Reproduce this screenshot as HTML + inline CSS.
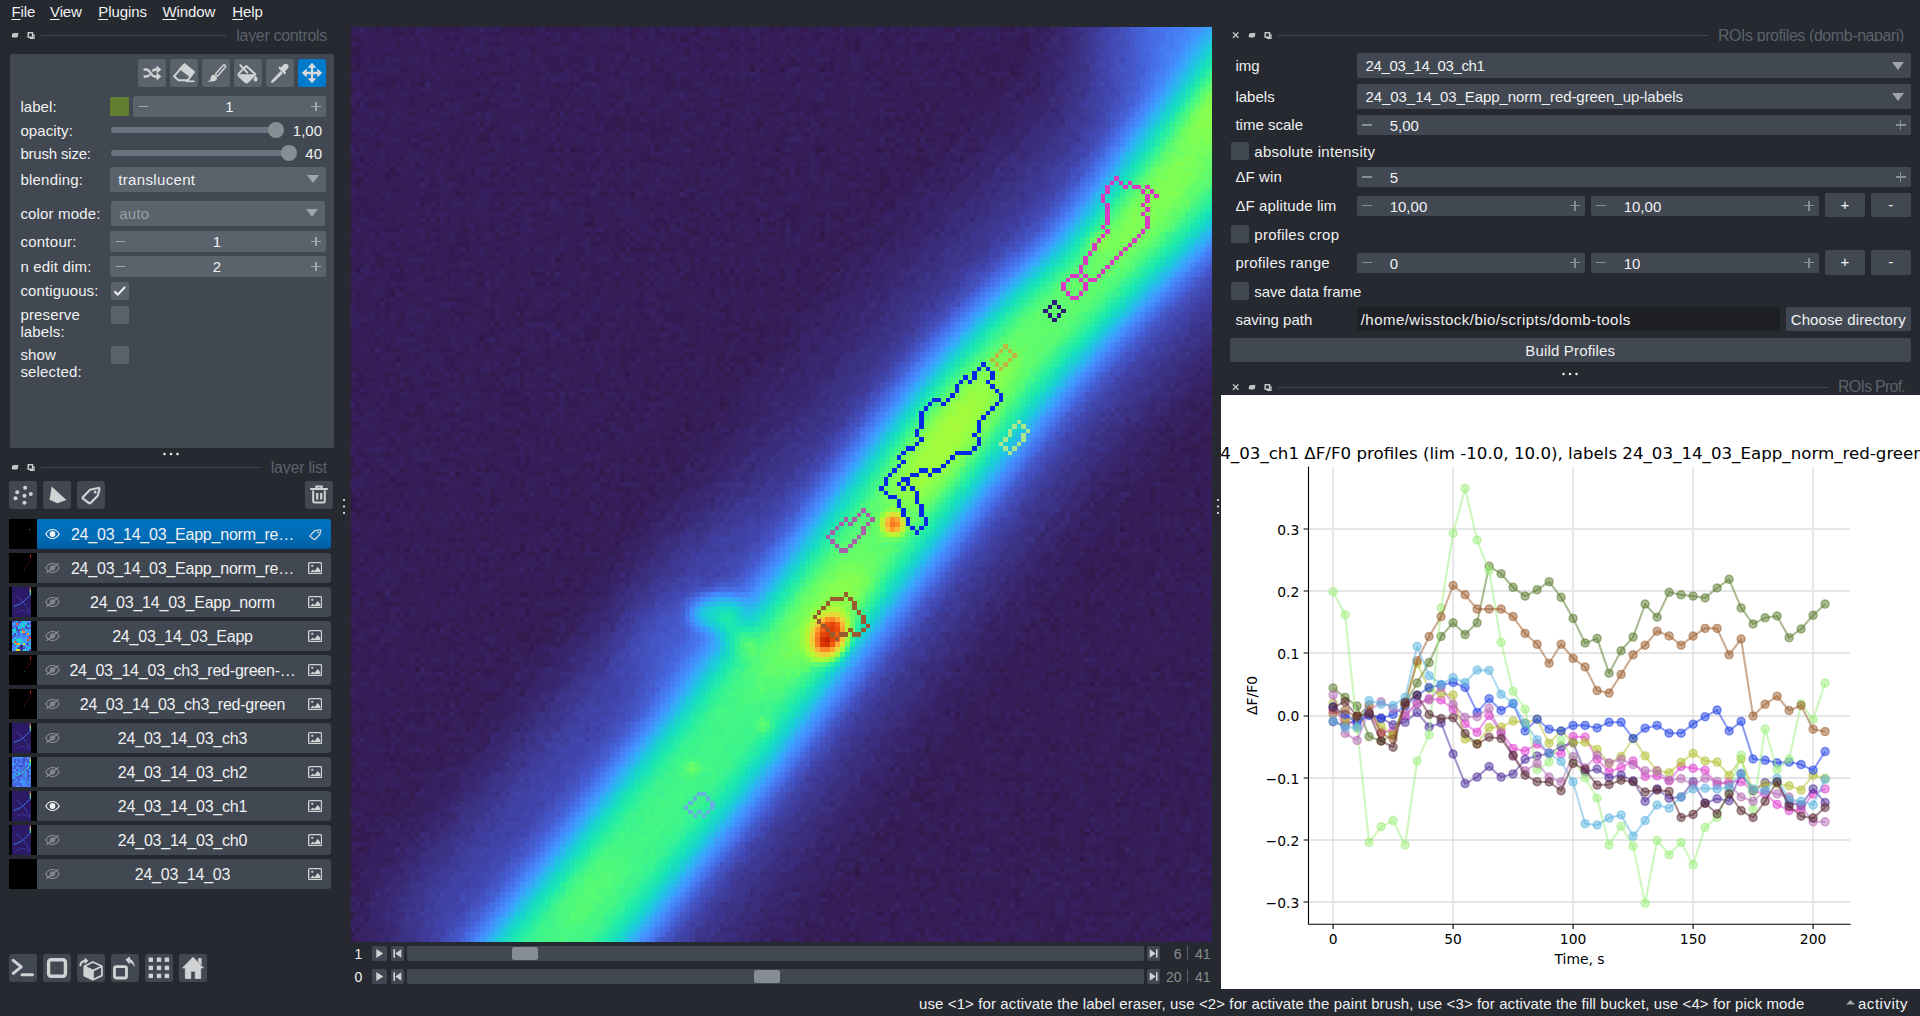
<!DOCTYPE html>
<html lang="en"><head><meta charset="utf-8"><title>napari</title>
<style>
*{box-sizing:border-box;margin:0;padding:0}
html,body{width:1920px;height:1016px;overflow:hidden;background:#262930}
body{position:relative;font-family:"Liberation Sans",sans-serif;font-size:15px;color:#f0f1f2;letter-spacing:0}
.abs{position:absolute}
.t{position:absolute;white-space:nowrap;line-height:20px;height:20px}
.menu span{position:absolute;top:2px;line-height:20px;font-size:15px;letter-spacing:-0.1px}
.menu u{text-decoration:underline;text-underline-offset:2px;text-decoration-thickness:1px}
.dtitle{position:absolute;height:13.600px;overflow:hidden;color:#5a626c;font-size:16px;letter-spacing:0}
.dtitle>span{position:absolute;right:0;top:-2.300px;line-height:20px;white-space:nowrap}
.dline{position:absolute;height:1px;background:#414851}
.panel{position:absolute;background:#414851;border-radius:2px}
.btn{position:absolute;width:28px;height:28px;border-radius:3px;background:#5a626c}
.btn.dk{background:#414851}
.btn.on{background:#007acc}
.btn svg{position:absolute;left:0;top:0}
.spin{position:absolute;background:#5a626c;border-radius:2px;height:21px}
.spin.dk{background:#414851;height:20px}
.spin .m,.spin .p{position:absolute;background:#a3a7ab}
.combo{position:absolute;background:#5a626c;border-radius:2px}
.combo.dk{background:#414851}
.arrow{position:absolute;width:0;height:0;border-left:6px solid transparent;border-right:6px solid transparent;border-top:8px solid #a0a5aa}
.chk{position:absolute;width:18px;height:18px;border-radius:2px;background:#5a626c}
.chk.dk{background:#414851}
.track{position:absolute;height:6px;border-radius:3px;background:#6a7380}
.knob{position:absolute;width:16px;height:16px;border-radius:8px;background:#868e93}
.row{position:absolute;left:9px;width:322px;height:30px;background:#414851;border-radius:0 3px 3px 0;overflow:hidden}
.row.sel{background:linear-gradient(#0071be 0%,#006cb6 60%,#005c9f 100%)}
.row .th{position:absolute;left:0;top:0;width:28px;height:30px;background:#000}
.row .nm{position:absolute;left:55.500px;width:236px;top:0;height:30px;line-height:31px;text-align:center;font-size:16px;letter-spacing:-0.22px;white-space:nowrap}
.row svg{position:absolute}
.gray{color:#868e93}
.pbtn{position:absolute;background:#414851;border-radius:2px;text-align:center;white-space:nowrap}
</style></head><body>
<!-- menu bar -->
<div class="menu">
<span style="left:11.5px"><u>F</u>ile</span><span style="left:50px"><u>V</u>iew</span><span style="left:98.3px"><u>P</u>lugins</span><span style="left:162.4px"><u>W</u>indow</span><span style="left:232.3px"><u>H</u>elp</span>
</div>
<!-- layer controls dock title -->
<svg class="abs" style="left:10px;top:30px" width="28" height="11" viewBox="0 0 28 11"><g stroke="#d1d2d4" fill="none" stroke-width="1.2"><ellipse cx="5" cy="5.300" rx="2.500" ry="1.700" fill="#d1d2d4" fill-opacity=".7"/><path d="M1.800 6.900 L8.300 3.300"/><rect x="18.200" y="2.800" width="4.400" height="4.400" stroke-width="1.400"/><path d="M19.800 8.500 h4.200 v-4.200" stroke-width="1.200"/></g></svg>
<div class="dline" style="left:41px;top:35px;width:185px"></div>
<div class="dtitle" style="left:200px;width:127px;top:28px"><span><span style="letter-spacing:-0.32px">layer controls</span></span></div>
<div class="panel" style="left:10px;top:54px;width:324px;height:393.5px"></div>
<!-- mode buttons -->
<div class="btn" style="left:138px;top:59px"><svg width="28" height="28" viewBox="0 0 28 28"><g fill="none" stroke="#d1d2d4" stroke-width="2.400"><path d="M5.600 10.500h3c3.200 0 4.600 7 8 7h3"/><path d="M5.600 17.500h3c1.300 0 2.300-.8 3.100-1.900M14.400 12.400c.8-1.100 1.700-1.900 2.900-1.900h2.300"/></g><path d="M18.600 6.500l4.800 4-4.800 4zM18.600 13.500l4.800 4-4.800 4z" fill="#d1d2d4"/></svg></div>
<div class="btn" style="left:170px;top:59px"><svg width="28" height="28" viewBox="0 0 28 28"><path d="M14.500 5.200L24 13l-6.500 8.300h-9L4 17.300z" fill="none" stroke="#d1d2d4" stroke-width="2" stroke-linejoin="round"/><path d="M14.500 5.200L24 13l-3.600 4.600L10 9.600z" fill="#d1d2d4" stroke="#d1d2d4" stroke-width="1.400" stroke-linejoin="round"/><path d="M15.500 22.300H24.500" stroke="#d1d2d4" stroke-width="1.600"/></svg></div>
<div class="btn" style="left:202px;top:59px"><svg width="28" height="28" viewBox="0 0 28 28"><path d="M22.200 7.400L15.200 15.300" stroke="#d1d2d4" stroke-width="4.400" stroke-linecap="round"/><path d="M22.200 7.400L15.200 15.300" stroke="#5a626c" stroke-width="1.400" stroke-linecap="round"/><path d="M12.300 15.700l2.700 2.700c.6 2.800-3 4.300-6.300 4l-3.600.5 2.500-1.300c1.400-1 .6-3.200 1.600-4.600.8-1.100 2-1.500 3.100-1.300z" fill="#d1d2d4"/></svg></div>
<div class="btn" style="left:234px;top:59px"><svg width="28" height="28" viewBox="0 0 28 28"><path d="M12.300 7L21.300 15.300 13.800 22.800c-.8.800-1.800.8-2.600 0L5 17c-.8-.8-.8-1.800 0-2.600z" fill="none" stroke="#d1d2d4" stroke-width="2" stroke-linejoin="round"/><path d="M4.800 15.300h16.500l-7.500 7.300c-.8.700-1.800.7-2.600 0z" fill="#d1d2d4"/><path d="M6.300 6.200l7 7.400" stroke="#d1d2d4" stroke-width="2" stroke-linecap="round"/><path d="M21.600 16.600c1.200 1.800 1.900 2.900 1.900 3.900a1.900 1.900 0 0 1-3.800 0c0-1 .7-2.100 1.900-3.900z" fill="#d1d2d4"/></svg></div>
<div class="btn" style="left:266px;top:59px"><svg width="28" height="28" viewBox="0 0 28 28"><path d="M15.600 12.900l-7.800 7.800-1.700 2.200 2.200-1.700 7.800-7.800" fill="none" stroke="#d1d2d4" stroke-width="2.200" stroke-linejoin="round"/><path d="M12.600 9.300l6.100 6.100 1.500-1.500-1.300-1.300 2.500-2.500c1.500-1.500 1.500-3.300.3-4.500s-3-1.200-4.500.3l-2.500 2.500-1.300-1.300z" fill="#d1d2d4"/></svg></div>
<div class="btn on" style="left:298px;top:59px"><svg width="28" height="28" viewBox="0 0 28 28"><path d="M14 7v14M7 14h14" stroke="#d9dcde" stroke-width="2.400"/><path d="M14 3.800l4.400 5h-8.800zM14 24.200l4.400-5h-8.800zM3.800 14l5-4.400v8.800zM24.200 14l-5-4.400v8.800z" fill="#d9dcde"/></svg></div>
<!-- label row -->
<div class="t" style="left:20.4px;top:97px"><span style="letter-spacing:0.07px">label:</span></div>
<div class="abs" style="left:110px;top:97px;width:19px;height:19px;background:#617e30"></div>
<div class="spin" style="left:133px;top:96px;width:193px"><i class="m" style="left:5.500px;top:9.500px;width:9.500px;height:1.500px"></i><i class="p" style="left:178px;top:9.500px;width:9.500px;height:1.500px"></i><i class="p" style="left:182px;top:5.500px;width:1.500px;height:9.500px"></i><div class="t" style="left:0;width:193px;text-align:center;top:1px">1</div></div>
<!-- opacity -->
<div class="t" style="left:20.4px;top:121px"><span style="letter-spacing:0.11px">opacity:</span></div>
<div class="track" style="left:111px;top:127px;width:172px"></div><div class="knob" style="left:268px;top:122px"></div>
<div class="t" style="left:262px;width:60px;text-align:right;top:121px;letter-spacing:0">1,00</div>
<!-- brush size -->
<div class="t" style="left:20.4px;top:144px"><span style="letter-spacing:-0.19px">brush size:</span></div>
<div class="track" style="left:111px;top:150px;width:184px"></div><div class="knob" style="left:281px;top:145px"></div>
<div class="t" style="left:262px;width:60px;text-align:right;top:144px;letter-spacing:0">40</div>
<!-- blending -->
<div class="t" style="left:20.4px;top:170px"><span style="letter-spacing:0.22px">blending:</span></div>
<div class="combo" style="left:110px;top:167px;width:216px;height:25px"><div class="t" style="left:8.300px;top:3px"><span style="letter-spacing:0.33px">translucent</span></div><i class="arrow" style="left:197px;top:8px"></i></div>
<!-- color mode -->
<div class="t" style="left:20.4px;top:203.500px"><span style="letter-spacing:0.17px">color mode:</span></div>
<div class="combo" style="left:111px;top:201px;width:214px;height:25px"><div class="t" style="left:8.300px;top:3px;color:#9aa0a6"><span style="letter-spacing:0.20px">auto</span></div><i class="arrow" style="left:195px;top:8px"></i></div>
<!-- contour -->
<div class="t" style="left:20.4px;top:232px"><span style="letter-spacing:0.26px">contour:</span></div>
<div class="spin" style="left:110px;top:231px;width:216px"><i class="m" style="left:5.500px;top:9.500px;width:9.500px;height:1.500px"></i><i class="p" style="left:201px;top:9.500px;width:9.500px;height:1.500px"></i><i class="p" style="left:205px;top:5.500px;width:1.500px;height:9.500px"></i><div class="t" style="left:0;width:214px;text-align:center;top:1px">1</div></div>
<!-- n edit dim -->
<div class="t" style="left:20.4px;top:257px"><span style="letter-spacing:0.18px">n edit dim:</span></div>
<div class="spin" style="left:110px;top:256px;width:216px"><i class="m" style="left:5.500px;top:9.500px;width:9.500px;height:1.500px"></i><i class="p" style="left:201px;top:9.500px;width:9.500px;height:1.500px"></i><i class="p" style="left:205px;top:5.500px;width:1.500px;height:9.500px"></i><div class="t" style="left:0;width:214px;text-align:center;top:1px">2</div></div>
<!-- checkboxes -->
<div class="t" style="left:20.4px;top:281px"><span style="letter-spacing:0.13px">contiguous:</span></div>
<div class="chk" style="left:111px;top:282px"><svg width="18" height="18" viewBox="0 0 18 18"><path d="M3.500 9.300l3.300 3.300 7.200-7.600" fill="none" stroke="#f0f1f2" stroke-width="2"/></svg></div>
<div class="t" style="left:20.4px;top:305px"><span style="letter-spacing:0.15px">preserve</span></div>
<div class="t" style="left:20.4px;top:321.500px"><span style="letter-spacing:0.15px">labels:</span></div>
<div class="chk" style="left:111px;top:306px"></div>
<div class="t" style="left:20.4px;top:344.500px"><span style="letter-spacing:0.15px">show</span></div>
<div class="t" style="left:20.4px;top:361.500px"><span style="letter-spacing:0.15px">selected:</span></div>
<div class="chk" style="left:111px;top:346px"></div>
<!-- splitter dots -->
<svg class="abs" style="left:162px;top:451px" width="18" height="6"><g fill="#f0f1f2"><circle cx="2.500" cy="3" r="1.250"/><circle cx="9" cy="3" r="1.250"/><circle cx="15.500" cy="3" r="1.250"/></g></svg>
<!-- layer list dock -->
<svg class="abs" style="left:10px;top:462px" width="28" height="11" viewBox="0 0 28 11"><g stroke="#d1d2d4" fill="none" stroke-width="1.200"><ellipse cx="5" cy="5.300" rx="2.500" ry="1.700" fill="#d1d2d4" fill-opacity=".7"/><path d="M1.800 6.900 L8.300 3.300"/><rect x="18.200" y="2.800" width="4.400" height="4.400" stroke-width="1.400"/><path d="M19.800 8.500 h4.200 v-4.200" stroke-width="1.200"/></g></svg>
<div class="dline" style="left:41px;top:467px;width:220px"></div>
<div class="dtitle" style="left:220px;width:107px;top:460px"><span><span style="letter-spacing:-0.25px">layer list</span></span></div>
<div class="btn dk" style="left:9px;top:481px"><svg width="28" height="28" viewBox="0 0 28 28"><g fill="#d1d2d4"><circle cx="16.100" cy="6.800" r="2"/><circle cx="8.200" cy="11.300" r="2"/><circle cx="21.800" cy="12.900" r="2"/><circle cx="15.500" cy="14.700" r="2"/><circle cx="6.500" cy="17.300" r="2"/><circle cx="15.500" cy="21.800" r="2"/></g></svg></div>
<div class="btn dk" style="left:43px;top:481px"><svg width="28" height="28" viewBox="0 0 28 28"><path d="M8.700 5.600l14.700 13.400-9.100 3.200-7.800-3.500z" fill="#d1d2d4"/></svg></div>
<div class="btn dk" style="left:77px;top:481px"><svg width="28" height="28" viewBox="0 0 28 28"><path d="M5.800 16.300l7.200-7.500 8.200-1.800c.9-.2 1.500.4 1.300 1.300l-1.800 6.500-7.200 7.200c-.5.500-1.100.5-1.600 0l-5.900-4.300c-.5-.4-.6-.9-.2-1.400z" fill="none" stroke="#d1d2d4" stroke-width="2.200" stroke-linejoin="round"/><circle cx="18.200" cy="11" r="1.500" fill="#d1d2d4"/></svg></div>
<div class="btn dk" style="left:305px;top:481px"><svg width="28" height="28" viewBox="0 0 28 28"><g fill="none" stroke="#d1d2d4" stroke-width="2"><path d="M5.200 8h17.600M11.300 7.500v-2h5.400v2"/><path d="M8.200 9.500v10.700c0 .8.600 1.400 1.400 1.400h8.800c.8 0 1.400-.6 1.400-1.400v-10.700"/><path d="M12.200 12v6.500M16.200 12v6.500" stroke-width="2.200"/></g></svg></div>

<div class="row sel" style="top:519px"><div class="th"><i class="abs" style="left:19.500px;top:9.500px;width:1.500px;height:1.500px;background:#7a8a30"></i></div><svg style="left:36px;top:9px" width="15" height="12" viewBox="0 0 15 12"><path d="M.8 6c1.600-3 4-4.500 6.700-4.500s5.100 1.500 6.700 4.500c-1.600 3-4 4.500-6.700 4.500s-5.100-1.500-6.700-4.500z" fill="none" stroke="#f0f1f2" stroke-width="1.200"/><circle cx="7.500" cy="6" r="2.900" fill="#f0f1f2"/></svg><div class="nm">24_03_14_03_Eapp_norm_re…</div><svg style="left:299.500px;top:8.800px" width="13" height="12.200" viewBox="0 0 15 14"><path d="M1.300 8.800l5.200-5.600 5.800-1.300c.8-.2 1.400.4 1.200 1.200l-1.300 4.700-5.200 5.200c-.4.400-.9.400-1.300 0l-4.400-3.200c-.4-.3-.4-.7 0-1z" fill="none" stroke="#d8dadc" stroke-width="1.500" stroke-linejoin="round"/><circle cx="10.300" cy="5" r="1.100" fill="#d8dadc"/></svg></div>
<div class="row" style="top:553px"><div class="th"><svg style="left:0;top:0" width="28" height="30" viewBox="0 0 28 30"><path d="M21.500 1.500v3" stroke="#e01818" fill="none" stroke-width="1" opacity=".9"/><path d="M21.500 4.500c0 4-2 6-4.500 8.500" stroke="#a01010" fill="none" stroke-width=".9" stroke-dasharray="1.200 1" opacity=".8"/><path d="M15.500 14.500c-3 2.500-6 3.500-11 5" stroke="#700808" fill="none" stroke-width=".9" stroke-dasharray="1 2" opacity=".6"/><path d="M3.400 1.500v3" stroke="#801010" stroke-width=".8" stroke-dasharray="1 1" opacity=".7"/><circle cx="15.500" cy="16.500" r=".6" fill="#108010"/></svg></div><svg style="left:36px;top:8px" width="15" height="14" viewBox="0 0 15 14"><g opacity=".55"><path d="M.8 7c1.600-3 4-4.500 6.700-4.500s5.100 1.500 6.700 4.500c-1.600 3-4 4.500-6.700 4.500s-5.100-1.500-6.700-4.500z" fill="none" stroke="#c8cacc" stroke-width="1.100"/><circle cx="7.500" cy="7" r="2.700" fill="#aeb1b5"/><path d="M1.500 11.800L13.500 2.200" stroke="#c8cacc" stroke-width="1.200"/></g></svg><div class="nm">24_03_14_03_Eapp_norm_re…</div><svg style="left:298.800px;top:9.200px" width="14.200" height="12.300" viewBox="0 0 15 13"><rect x=".7" y=".7" width="13.600" height="11.600" rx="1.200" fill="none" stroke="#d1d2d4" stroke-width="1.400"/><circle cx="4.500" cy="4" r="1.200" fill="#d1d2d4"/><path d="M2 10.900l3.200-3 1.700 1.500 3.400-4 2.700 3v2.500z" fill="#d1d2d4"/></svg></div>
<div class="row" style="top:587px"><div class="th"><i class="abs" style="left:3px;top:0;width:19px;height:30px;background:#2d1a64"></i><svg style="left:3px;top:0" width="19" height="30" viewBox="0 0 19 30"><g fill="none" stroke-width="1"><path d="M18.300 .5V8L11.500 14.500 8 17 1.500 19.500" stroke="#3c78f0" opacity=".95"/><path d="M4 8.500L11 14.500 13 17.500 18.500 26" stroke="#3a52c8" opacity=".7"/><path d="M3.500 26.500C6 23.500 12 22 18 27" stroke="#3a52c8" opacity=".55"/><path d="M18.300 .5V2.500" stroke="#f06020"/><path d="M18.300 2.500V5" stroke="#c8f040"/><path d="M18.300 5V8" stroke="#30e0b0"/></g></svg></div><svg style="left:36px;top:8px" width="15" height="14" viewBox="0 0 15 14"><g opacity=".55"><path d="M.8 7c1.600-3 4-4.500 6.700-4.500s5.100 1.500 6.700 4.500c-1.600 3-4 4.500-6.700 4.500s-5.100-1.500-6.700-4.500z" fill="none" stroke="#c8cacc" stroke-width="1.100"/><circle cx="7.500" cy="7" r="2.700" fill="#aeb1b5"/><path d="M1.500 11.800L13.500 2.200" stroke="#c8cacc" stroke-width="1.200"/></g></svg><div class="nm">24_03_14_03_Eapp_norm</div><svg style="left:298.800px;top:9.200px" width="14.200" height="12.300" viewBox="0 0 15 13"><rect x=".7" y=".7" width="13.600" height="11.600" rx="1.200" fill="none" stroke="#d1d2d4" stroke-width="1.400"/><circle cx="4.500" cy="4" r="1.200" fill="#d1d2d4"/><path d="M2 10.900l3.200-3 1.700 1.500 3.400-4 2.700 3v2.500z" fill="#d1d2d4"/></svg></div>
<div class="row" style="top:621px"><div class="th"><svg style="left:3px;top:0" width="19" height="30" viewBox="0 0 19 30" shape-rendering="crispEdges"><rect x="0.0" y="0" width="2" height="2.100" fill="#4563d9"/><rect x="1.9" y="0" width="2" height="2.100" fill="#4673eb"/><rect x="3.8" y="0" width="2" height="2.100" fill="#3e9bfe"/><rect x="5.7" y="0" width="2" height="2.100" fill="#424bb5"/><rect x="7.6" y="0" width="2" height="2.100" fill="#4666dd"/><rect x="9.5" y="0" width="2" height="2.100" fill="#18d5cc"/><rect x="11.4" y="0" width="2" height="2.100" fill="#26bde9"/><rect x="13.3" y="0" width="2" height="2.100" fill="#3e9bfe"/><rect x="15.2" y="0" width="2" height="2.100" fill="#3e9bfe"/><rect x="17.1" y="0" width="2" height="2.100" fill="#4589fc"/><rect x="0.0" y="2" width="2" height="2.100" fill="#39a2fc"/><rect x="1.9" y="2" width="2" height="2.100" fill="#31aff5"/><rect x="3.8" y="2" width="2" height="2.100" fill="#ec520e"/><rect x="5.7" y="2" width="2" height="2.100" fill="#4682f8"/><rect x="7.6" y="2" width="2" height="2.100" fill="#21c4e1"/><rect x="9.5" y="2" width="2" height="2.100" fill="#1dcbda"/><rect x="11.4" y="2" width="2" height="2.100" fill="#2bb6ef"/><rect x="13.3" y="2" width="2" height="2.100" fill="#1ccdd7"/><rect x="15.2" y="2" width="2" height="2.100" fill="#4353c2"/><rect x="17.1" y="2" width="2" height="2.100" fill="#4560d6"/><rect x="0.0" y="4" width="2" height="2.100" fill="#467df4"/><rect x="1.9" y="4" width="2" height="2.100" fill="#466be3"/><rect x="3.8" y="4" width="2" height="2.100" fill="#4675ed"/><rect x="5.7" y="4" width="2" height="2.100" fill="#4193fe"/><rect x="7.6" y="4" width="2" height="2.100" fill="#20c6df"/><rect x="9.5" y="4" width="2" height="2.100" fill="#1dcbda"/><rect x="11.4" y="4" width="2" height="2.100" fill="#18d5cc"/><rect x="13.3" y="4" width="2" height="2.100" fill="#4458cb"/><rect x="15.2" y="4" width="2" height="2.100" fill="#1ad1d2"/><rect x="17.1" y="4" width="2" height="2.100" fill="#4291fe"/><rect x="0.0" y="6" width="2" height="2.100" fill="#455ed2"/><rect x="1.9" y="6" width="2" height="2.100" fill="#4291fe"/><rect x="3.8" y="6" width="2" height="2.100" fill="#4350be"/><rect x="5.7" y="6" width="2" height="2.100" fill="#18d5cc"/><rect x="7.6" y="6" width="2" height="2.100" fill="#2bb6ef"/><rect x="9.5" y="6" width="2" height="2.100" fill="#4458cb"/><rect x="11.4" y="6" width="2" height="2.100" fill="#2fb1f3"/><rect x="13.3" y="6" width="2" height="2.100" fill="#434eba"/><rect x="15.2" y="6" width="2" height="2.100" fill="#434eba"/><rect x="17.1" y="6" width="2" height="2.100" fill="#466de6"/><rect x="0.0" y="8" width="2" height="2.100" fill="#19d3cf"/><rect x="1.9" y="8" width="2" height="2.100" fill="#18d5cc"/><rect x="3.8" y="8" width="2" height="2.100" fill="#4350be"/><rect x="5.7" y="8" width="2" height="2.100" fill="#434eba"/><rect x="7.6" y="8" width="2" height="2.100" fill="#467af2"/><rect x="9.5" y="8" width="2" height="2.100" fill="#ec520e"/><rect x="11.4" y="8" width="2" height="2.100" fill="#466be3"/><rect x="13.3" y="8" width="2" height="2.100" fill="#20c6df"/><rect x="15.2" y="8" width="2" height="2.100" fill="#4682f8"/><rect x="17.1" y="8" width="2" height="2.100" fill="#3c9dfd"/><rect x="0.0" y="10" width="2" height="2.100" fill="#438efd"/><rect x="1.9" y="10" width="2" height="2.100" fill="#1ccdd7"/><rect x="3.8" y="10" width="2" height="2.100" fill="#467df4"/><rect x="5.7" y="10" width="2" height="2.100" fill="#4563d9"/><rect x="7.6" y="10" width="2" height="2.100" fill="#19d3cf"/><rect x="9.5" y="10" width="2" height="2.100" fill="#fbb537"/><rect x="11.4" y="10" width="2" height="2.100" fill="#fc8926"/><rect x="13.3" y="10" width="2" height="2.100" fill="#3e9bfe"/><rect x="15.2" y="10" width="2" height="2.100" fill="#3e9bfe"/><rect x="17.1" y="10" width="2" height="2.100" fill="#39a2fc"/><rect x="0.0" y="12" width="2" height="2.100" fill="#36a8f9"/><rect x="1.9" y="12" width="2" height="2.100" fill="#424bb5"/><rect x="3.8" y="12" width="2" height="2.100" fill="#39a2fc"/><rect x="5.7" y="12" width="2" height="2.100" fill="#4563d9"/><rect x="7.6" y="12" width="2" height="2.100" fill="#4096fe"/><rect x="9.5" y="12" width="2" height="2.100" fill="#4673eb"/><rect x="11.4" y="12" width="2" height="2.100" fill="#4673eb"/><rect x="13.3" y="12" width="2" height="2.100" fill="#466be3"/><rect x="15.2" y="12" width="2" height="2.100" fill="#fd952b"/><rect x="17.1" y="12" width="2" height="2.100" fill="#33acf6"/><rect x="0.0" y="14" width="2" height="2.100" fill="#4560d6"/><rect x="1.9" y="14" width="2" height="2.100" fill="#4563d9"/><rect x="3.8" y="14" width="2" height="2.100" fill="#467ff6"/><rect x="5.7" y="14" width="2" height="2.100" fill="#4666dd"/><rect x="7.6" y="14" width="2" height="2.100" fill="#4589fc"/><rect x="9.5" y="14" width="2" height="2.100" fill="#3f98fe"/><rect x="11.4" y="14" width="2" height="2.100" fill="#466de6"/><rect x="13.3" y="14" width="2" height="2.100" fill="#3ba0fc"/><rect x="15.2" y="14" width="2" height="2.100" fill="#467ff6"/><rect x="17.1" y="14" width="2" height="2.100" fill="#4456c7"/><rect x="0.0" y="16" width="2" height="2.100" fill="#455ed2"/><rect x="1.9" y="16" width="2" height="2.100" fill="#26bde9"/><rect x="3.8" y="16" width="2" height="2.100" fill="#467ff6"/><rect x="5.7" y="16" width="2" height="2.100" fill="#23c2e4"/><rect x="7.6" y="16" width="2" height="2.100" fill="#3ba0fc"/><rect x="9.5" y="16" width="2" height="2.100" fill="#3f98fe"/><rect x="11.4" y="16" width="2" height="2.100" fill="#438efd"/><rect x="13.3" y="16" width="2" height="2.100" fill="#4291fe"/><rect x="15.2" y="16" width="2" height="2.100" fill="#467af2"/><rect x="17.1" y="16" width="2" height="2.100" fill="#e3440a"/><rect x="0.0" y="18" width="2" height="2.100" fill="#21c4e1"/><rect x="1.9" y="18" width="2" height="2.100" fill="#4587fb"/><rect x="3.8" y="18" width="2" height="2.100" fill="#1ae4b6"/><rect x="5.7" y="18" width="2" height="2.100" fill="#17dac4"/><rect x="7.6" y="18" width="2" height="2.100" fill="#18d7ca"/><rect x="9.5" y="18" width="2" height="2.100" fill="#38a5fb"/><rect x="11.4" y="18" width="2" height="2.100" fill="#4096fe"/><rect x="13.3" y="18" width="2" height="2.100" fill="#2bb6ef"/><rect x="15.2" y="18" width="2" height="2.100" fill="#e84b0c"/><rect x="17.1" y="18" width="2" height="2.100" fill="#38a5fb"/><rect x="0.0" y="20" width="2" height="2.100" fill="#20c6df"/><rect x="1.9" y="20" width="2" height="2.100" fill="#f66b18"/><rect x="3.8" y="20" width="2" height="2.100" fill="#4682f8"/><rect x="5.7" y="20" width="2" height="2.100" fill="#19d3cf"/><rect x="7.6" y="20" width="2" height="2.100" fill="#2ab9ed"/><rect x="9.5" y="20" width="2" height="2.100" fill="#19d3cf"/><rect x="11.4" y="20" width="2" height="2.100" fill="#3e9bfe"/><rect x="13.3" y="20" width="2" height="2.100" fill="#34aaf8"/><rect x="15.2" y="20" width="2" height="2.100" fill="#467ff6"/><rect x="17.1" y="20" width="2" height="2.100" fill="#448cfd"/><rect x="0.0" y="22" width="2" height="2.100" fill="#455bce"/><rect x="1.9" y="22" width="2" height="2.100" fill="#19d3cf"/><rect x="3.8" y="22" width="2" height="2.100" fill="#fc8624"/><rect x="5.7" y="22" width="2" height="2.100" fill="#efcd39"/><rect x="7.6" y="22" width="2" height="2.100" fill="#39a2fc"/><rect x="9.5" y="22" width="2" height="2.100" fill="#2bb6ef"/><rect x="11.4" y="22" width="2" height="2.100" fill="#cfea34"/><rect x="13.3" y="22" width="2" height="2.100" fill="#467af2"/><rect x="15.2" y="22" width="2" height="2.100" fill="#455bce"/><rect x="17.1" y="22" width="2" height="2.100" fill="#25c0e6"/><rect x="0.0" y="24" width="2" height="2.100" fill="#4587fb"/><rect x="1.9" y="24" width="2" height="2.100" fill="#466de6"/><rect x="3.8" y="24" width="2" height="2.100" fill="#2db4f1"/><rect x="5.7" y="24" width="2" height="2.100" fill="#3e9bfe"/><rect x="7.6" y="24" width="2" height="2.100" fill="#38266c"/><rect x="9.5" y="24" width="2" height="2.100" fill="#3b2f7f"/><rect x="11.4" y="24" width="2" height="2.100" fill="#4584f9"/><rect x="13.3" y="24" width="2" height="2.100" fill="#33acf6"/><rect x="15.2" y="24" width="2" height="2.100" fill="#4675ed"/><rect x="17.1" y="24" width="2" height="2.100" fill="#3f98fe"/><rect x="0.0" y="26" width="2" height="2.100" fill="#4675ed"/><rect x="1.9" y="26" width="2" height="2.100" fill="#36a8f9"/><rect x="3.8" y="26" width="2" height="2.100" fill="#36a8f9"/><rect x="5.7" y="26" width="2" height="2.100" fill="#3d3791"/><rect x="7.6" y="26" width="2" height="2.100" fill="#3c3285"/><rect x="9.5" y="26" width="2" height="2.100" fill="#4148b0"/><rect x="11.4" y="26" width="2" height="2.100" fill="#4043a6"/><rect x="13.3" y="26" width="2" height="2.100" fill="#4584f9"/><rect x="15.2" y="26" width="2" height="2.100" fill="#2ab9ed"/><rect x="17.1" y="26" width="2" height="2.100" fill="#21c4e1"/><rect x="0.0" y="28" width="2" height="2.100" fill="#3ba0fc"/><rect x="1.9" y="28" width="2" height="2.100" fill="#4291fe"/><rect x="3.8" y="28" width="2" height="2.100" fill="#dde036"/><rect x="5.7" y="28" width="2" height="2.100" fill="#d4e735"/><rect x="7.6" y="28" width="2" height="2.100" fill="#4145ab"/><rect x="9.5" y="28" width="2" height="2.100" fill="#4145ab"/><rect x="11.4" y="28" width="2" height="2.100" fill="#26bde9"/><rect x="13.3" y="28" width="2" height="2.100" fill="#26bde9"/><rect x="15.2" y="28" width="2" height="2.100" fill="#4193fe"/><rect x="17.1" y="28" width="2" height="2.100" fill="#434eba"/></svg></div><svg style="left:36px;top:8px" width="15" height="14" viewBox="0 0 15 14"><g opacity=".55"><path d="M.8 7c1.600-3 4-4.500 6.700-4.500s5.100 1.500 6.700 4.500c-1.600 3-4 4.500-6.700 4.500s-5.100-1.500-6.700-4.500z" fill="none" stroke="#c8cacc" stroke-width="1.100"/><circle cx="7.500" cy="7" r="2.700" fill="#aeb1b5"/><path d="M1.500 11.800L13.500 2.200" stroke="#c8cacc" stroke-width="1.200"/></g></svg><div class="nm">24_03_14_03_Eapp</div><svg style="left:298.800px;top:9.200px" width="14.200" height="12.300" viewBox="0 0 15 13"><rect x=".7" y=".7" width="13.600" height="11.600" rx="1.200" fill="none" stroke="#d1d2d4" stroke-width="1.400"/><circle cx="4.500" cy="4" r="1.200" fill="#d1d2d4"/><path d="M2 10.900l3.200-3 1.700 1.500 3.400-4 2.700 3v2.500z" fill="#d1d2d4"/></svg></div>
<div class="row" style="top:655px"><div class="th"><svg style="left:0;top:0" width="28" height="30" viewBox="0 0 28 30"><path d="M21.500 1.500v3" stroke="#e01818" fill="none" stroke-width="1" opacity=".9"/><path d="M21.500 4.500c0 4-2 6-4.500 8.500" stroke="#a01010" fill="none" stroke-width=".9" stroke-dasharray="1.200 1" opacity=".8"/><path d="M15.500 14.500c-3 2.500-6 3.500-11 5" stroke="#700808" fill="none" stroke-width=".9" stroke-dasharray="1 2" opacity=".6"/><path d="M3.400 1.500v3" stroke="#801010" stroke-width=".8" stroke-dasharray="1 1" opacity=".7"/><circle cx="15.500" cy="16.500" r=".6" fill="#108010"/></svg></div><svg style="left:36px;top:8px" width="15" height="14" viewBox="0 0 15 14"><g opacity=".55"><path d="M.8 7c1.600-3 4-4.500 6.700-4.500s5.100 1.500 6.700 4.500c-1.600 3-4 4.500-6.700 4.500s-5.100-1.500-6.700-4.500z" fill="none" stroke="#c8cacc" stroke-width="1.100"/><circle cx="7.500" cy="7" r="2.700" fill="#aeb1b5"/><path d="M1.500 11.800L13.500 2.200" stroke="#c8cacc" stroke-width="1.200"/></g></svg><div class="nm">24_03_14_03_ch3_red-green-…</div><svg style="left:298.800px;top:9.200px" width="14.200" height="12.300" viewBox="0 0 15 13"><rect x=".7" y=".7" width="13.600" height="11.600" rx="1.200" fill="none" stroke="#d1d2d4" stroke-width="1.400"/><circle cx="4.500" cy="4" r="1.200" fill="#d1d2d4"/><path d="M2 10.900l3.200-3 1.700 1.500 3.400-4 2.700 3v2.500z" fill="#d1d2d4"/></svg></div>
<div class="row" style="top:689px"><div class="th"><svg style="left:0;top:0" width="28" height="30" viewBox="0 0 28 30"><path d="M21.500 1.500v3" stroke="#e01818" fill="none" stroke-width="1" opacity=".9"/><path d="M21.500 4.500c0 4-2 6-4.500 8.500" stroke="#a01010" fill="none" stroke-width=".9" stroke-dasharray="1.200 1" opacity=".8"/><path d="M15.500 14.500c-3 2.500-6 3.500-11 5" stroke="#700808" fill="none" stroke-width=".9" stroke-dasharray="1 2" opacity=".6"/><path d="M3.400 1.500v3" stroke="#801010" stroke-width=".8" stroke-dasharray="1 1" opacity=".7"/><circle cx="15.500" cy="16.500" r=".6" fill="#108010"/></svg></div><svg style="left:36px;top:8px" width="15" height="14" viewBox="0 0 15 14"><g opacity=".55"><path d="M.8 7c1.600-3 4-4.500 6.700-4.500s5.100 1.500 6.700 4.500c-1.600 3-4 4.500-6.700 4.500s-5.100-1.500-6.700-4.500z" fill="none" stroke="#c8cacc" stroke-width="1.100"/><circle cx="7.500" cy="7" r="2.700" fill="#aeb1b5"/><path d="M1.500 11.800L13.500 2.200" stroke="#c8cacc" stroke-width="1.200"/></g></svg><div class="nm">24_03_14_03_ch3_red-green</div><svg style="left:298.800px;top:9.200px" width="14.200" height="12.300" viewBox="0 0 15 13"><rect x=".7" y=".7" width="13.600" height="11.600" rx="1.200" fill="none" stroke="#d1d2d4" stroke-width="1.400"/><circle cx="4.500" cy="4" r="1.200" fill="#d1d2d4"/><path d="M2 10.900l3.200-3 1.700 1.500 3.400-4 2.700 3v2.500z" fill="#d1d2d4"/></svg></div>
<div class="row" style="top:723px"><div class="th"><i class="abs" style="left:3px;top:0;width:19px;height:30px;background:#2d1a64"></i><svg style="left:3px;top:0" width="19" height="30" viewBox="0 0 19 30"><g fill="none" stroke-width="1"><path d="M18.300 .5V8L11.500 14.500 8 17 1.500 19.500" stroke="#3c78f0" opacity=".95"/><path d="M4 8.500L11 14.500 13 17.500 18.500 26" stroke="#3a52c8" opacity=".7"/><path d="M3.500 26.500C6 23.500 12 22 18 27" stroke="#3a52c8" opacity=".55"/><path d="M18.300 .5V2.500" stroke="#f06020"/><path d="M18.300 2.500V5" stroke="#c8f040"/><path d="M18.300 5V8" stroke="#30e0b0"/></g></svg></div><svg style="left:36px;top:8px" width="15" height="14" viewBox="0 0 15 14"><g opacity=".55"><path d="M.8 7c1.600-3 4-4.500 6.700-4.500s5.100 1.500 6.700 4.500c-1.600 3-4 4.500-6.700 4.500s-5.100-1.500-6.700-4.500z" fill="none" stroke="#c8cacc" stroke-width="1.100"/><circle cx="7.500" cy="7" r="2.700" fill="#aeb1b5"/><path d="M1.500 11.800L13.500 2.200" stroke="#c8cacc" stroke-width="1.200"/></g></svg><div class="nm">24_03_14_03_ch3</div><svg style="left:298.800px;top:9.200px" width="14.200" height="12.300" viewBox="0 0 15 13"><rect x=".7" y=".7" width="13.600" height="11.600" rx="1.200" fill="none" stroke="#d1d2d4" stroke-width="1.400"/><circle cx="4.500" cy="4" r="1.200" fill="#d1d2d4"/><path d="M2 10.900l3.200-3 1.700 1.500 3.400-4 2.700 3v2.500z" fill="#d1d2d4"/></svg></div>
<div class="row" style="top:757px"><div class="th"><svg style="left:3px;top:0" width="19" height="30" viewBox="0 0 19 30"><g shape-rendering="crispEdges"><rect x="0.0" y="0" width="2" height="2.100" fill="#467af2"/><rect x="1.9" y="0" width="2" height="2.100" fill="#4584f9"/><rect x="3.8" y="0" width="2" height="2.100" fill="#4587fb"/><rect x="5.7" y="0" width="2" height="2.100" fill="#4096fe"/><rect x="7.6" y="0" width="2" height="2.100" fill="#4584f9"/><rect x="9.5" y="0" width="2" height="2.100" fill="#4193fe"/><rect x="11.4" y="0" width="2" height="2.100" fill="#4353c2"/><rect x="13.3" y="0" width="2" height="2.100" fill="#466de6"/><rect x="15.2" y="0" width="2" height="2.100" fill="#4096fe"/><rect x="17.1" y="0" width="2" height="2.100" fill="#467df4"/><rect x="0.0" y="2" width="2" height="2.100" fill="#4291fe"/><rect x="1.9" y="2" width="2" height="2.100" fill="#4456c7"/><rect x="3.8" y="2" width="2" height="2.100" fill="#466de6"/><rect x="5.7" y="2" width="2" height="2.100" fill="#455ed2"/><rect x="7.6" y="2" width="2" height="2.100" fill="#4673eb"/><rect x="9.5" y="2" width="2" height="2.100" fill="#4675ed"/><rect x="11.4" y="2" width="2" height="2.100" fill="#4353c2"/><rect x="13.3" y="2" width="2" height="2.100" fill="#455bce"/><rect x="15.2" y="2" width="2" height="2.100" fill="#4560d6"/><rect x="17.1" y="2" width="2" height="2.100" fill="#4193fe"/><rect x="0.0" y="4" width="2" height="2.100" fill="#4584f9"/><rect x="1.9" y="4" width="2" height="2.100" fill="#4458cb"/><rect x="3.8" y="4" width="2" height="2.100" fill="#4589fc"/><rect x="5.7" y="4" width="2" height="2.100" fill="#4458cb"/><rect x="7.6" y="4" width="2" height="2.100" fill="#467af2"/><rect x="9.5" y="4" width="2" height="2.100" fill="#4456c7"/><rect x="11.4" y="4" width="2" height="2.100" fill="#4353c2"/><rect x="13.3" y="4" width="2" height="2.100" fill="#438efd"/><rect x="15.2" y="4" width="2" height="2.100" fill="#455bce"/><rect x="17.1" y="4" width="2" height="2.100" fill="#455bce"/><rect x="0.0" y="6" width="2" height="2.100" fill="#3f98fe"/><rect x="1.9" y="6" width="2" height="2.100" fill="#438efd"/><rect x="3.8" y="6" width="2" height="2.100" fill="#4560d6"/><rect x="5.7" y="6" width="2" height="2.100" fill="#4096fe"/><rect x="7.6" y="6" width="2" height="2.100" fill="#4673eb"/><rect x="9.5" y="6" width="2" height="2.100" fill="#467ff6"/><rect x="11.4" y="6" width="2" height="2.100" fill="#455bce"/><rect x="13.3" y="6" width="2" height="2.100" fill="#4096fe"/><rect x="15.2" y="6" width="2" height="2.100" fill="#467ff6"/><rect x="17.1" y="6" width="2" height="2.100" fill="#4096fe"/><rect x="0.0" y="8" width="2" height="2.100" fill="#4291fe"/><rect x="1.9" y="8" width="2" height="2.100" fill="#4560d6"/><rect x="3.8" y="8" width="2" height="2.100" fill="#4666dd"/><rect x="5.7" y="8" width="2" height="2.100" fill="#4458cb"/><rect x="7.6" y="8" width="2" height="2.100" fill="#4458cb"/><rect x="9.5" y="8" width="2" height="2.100" fill="#4353c2"/><rect x="11.4" y="8" width="2" height="2.100" fill="#4560d6"/><rect x="13.3" y="8" width="2" height="2.100" fill="#4678f0"/><rect x="15.2" y="8" width="2" height="2.100" fill="#4353c2"/><rect x="17.1" y="8" width="2" height="2.100" fill="#467ff6"/><rect x="0.0" y="10" width="2" height="2.100" fill="#4563d9"/><rect x="1.9" y="10" width="2" height="2.100" fill="#4563d9"/><rect x="3.8" y="10" width="2" height="2.100" fill="#4589fc"/><rect x="5.7" y="10" width="2" height="2.100" fill="#466de6"/><rect x="7.6" y="10" width="2" height="2.100" fill="#4563d9"/><rect x="9.5" y="10" width="2" height="2.100" fill="#466de6"/><rect x="11.4" y="10" width="2" height="2.100" fill="#467ff6"/><rect x="13.3" y="10" width="2" height="2.100" fill="#4353c2"/><rect x="15.2" y="10" width="2" height="2.100" fill="#3f98fe"/><rect x="17.1" y="10" width="2" height="2.100" fill="#4353c2"/><rect x="0.0" y="12" width="2" height="2.100" fill="#4584f9"/><rect x="1.9" y="12" width="2" height="2.100" fill="#448cfd"/><rect x="3.8" y="12" width="2" height="2.100" fill="#4353c2"/><rect x="5.7" y="12" width="2" height="2.100" fill="#4587fb"/><rect x="7.6" y="12" width="2" height="2.100" fill="#4666dd"/><rect x="9.5" y="12" width="2" height="2.100" fill="#4675ed"/><rect x="11.4" y="12" width="2" height="2.100" fill="#4353c2"/><rect x="13.3" y="12" width="2" height="2.100" fill="#4353c2"/><rect x="15.2" y="12" width="2" height="2.100" fill="#455bce"/><rect x="17.1" y="12" width="2" height="2.100" fill="#4096fe"/><rect x="0.0" y="14" width="2" height="2.100" fill="#455bce"/><rect x="1.9" y="14" width="2" height="2.100" fill="#4584f9"/><rect x="3.8" y="14" width="2" height="2.100" fill="#4193fe"/><rect x="5.7" y="14" width="2" height="2.100" fill="#4096fe"/><rect x="7.6" y="14" width="2" height="2.100" fill="#4666dd"/><rect x="9.5" y="14" width="2" height="2.100" fill="#4666dd"/><rect x="11.4" y="14" width="2" height="2.100" fill="#4673eb"/><rect x="13.3" y="14" width="2" height="2.100" fill="#4587fb"/><rect x="15.2" y="14" width="2" height="2.100" fill="#4456c7"/><rect x="17.1" y="14" width="2" height="2.100" fill="#4584f9"/><rect x="0.0" y="16" width="2" height="2.100" fill="#4589fc"/><rect x="1.9" y="16" width="2" height="2.100" fill="#438efd"/><rect x="3.8" y="16" width="2" height="2.100" fill="#4353c2"/><rect x="5.7" y="16" width="2" height="2.100" fill="#4096fe"/><rect x="7.6" y="16" width="2" height="2.100" fill="#4456c7"/><rect x="9.5" y="16" width="2" height="2.100" fill="#4563d9"/><rect x="11.4" y="16" width="2" height="2.100" fill="#4678f0"/><rect x="13.3" y="16" width="2" height="2.100" fill="#4193fe"/><rect x="15.2" y="16" width="2" height="2.100" fill="#4563d9"/><rect x="17.1" y="16" width="2" height="2.100" fill="#4193fe"/><rect x="0.0" y="18" width="2" height="2.100" fill="#4673eb"/><rect x="1.9" y="18" width="2" height="2.100" fill="#4563d9"/><rect x="3.8" y="18" width="2" height="2.100" fill="#4563d9"/><rect x="5.7" y="18" width="2" height="2.100" fill="#455bce"/><rect x="7.6" y="18" width="2" height="2.100" fill="#4456c7"/><rect x="9.5" y="18" width="2" height="2.100" fill="#4458cb"/><rect x="11.4" y="18" width="2" height="2.100" fill="#467ff6"/><rect x="13.3" y="18" width="2" height="2.100" fill="#3e9bfe"/><rect x="15.2" y="18" width="2" height="2.100" fill="#4458cb"/><rect x="17.1" y="18" width="2" height="2.100" fill="#4353c2"/><rect x="0.0" y="20" width="2" height="2.100" fill="#3f98fe"/><rect x="1.9" y="20" width="2" height="2.100" fill="#4673eb"/><rect x="3.8" y="20" width="2" height="2.100" fill="#4668e0"/><rect x="5.7" y="20" width="2" height="2.100" fill="#455ed2"/><rect x="7.6" y="20" width="2" height="2.100" fill="#4678f0"/><rect x="9.5" y="20" width="2" height="2.100" fill="#448cfd"/><rect x="11.4" y="20" width="2" height="2.100" fill="#466de6"/><rect x="13.3" y="20" width="2" height="2.100" fill="#466be3"/><rect x="15.2" y="20" width="2" height="2.100" fill="#4353c2"/><rect x="17.1" y="20" width="2" height="2.100" fill="#4193fe"/><rect x="0.0" y="22" width="2" height="2.100" fill="#4353c2"/><rect x="1.9" y="22" width="2" height="2.100" fill="#4670e8"/><rect x="3.8" y="22" width="2" height="2.100" fill="#448cfd"/><rect x="5.7" y="22" width="2" height="2.100" fill="#4458cb"/><rect x="7.6" y="22" width="2" height="2.100" fill="#4682f8"/><rect x="9.5" y="22" width="2" height="2.100" fill="#4096fe"/><rect x="11.4" y="22" width="2" height="2.100" fill="#467af2"/><rect x="13.3" y="22" width="2" height="2.100" fill="#4587fb"/><rect x="15.2" y="22" width="2" height="2.100" fill="#4456c7"/><rect x="17.1" y="22" width="2" height="2.100" fill="#466be3"/><rect x="0.0" y="24" width="2" height="2.100" fill="#4458cb"/><rect x="1.9" y="24" width="2" height="2.100" fill="#448cfd"/><rect x="3.8" y="24" width="2" height="2.100" fill="#4560d6"/><rect x="5.7" y="24" width="2" height="2.100" fill="#466de6"/><rect x="7.6" y="24" width="2" height="2.100" fill="#3e9bfe"/><rect x="9.5" y="24" width="2" height="2.100" fill="#448cfd"/><rect x="11.4" y="24" width="2" height="2.100" fill="#3f98fe"/><rect x="13.3" y="24" width="2" height="2.100" fill="#466de6"/><rect x="15.2" y="24" width="2" height="2.100" fill="#4670e8"/><rect x="17.1" y="24" width="2" height="2.100" fill="#4682f8"/><rect x="0.0" y="26" width="2" height="2.100" fill="#466de6"/><rect x="1.9" y="26" width="2" height="2.100" fill="#4560d6"/><rect x="3.8" y="26" width="2" height="2.100" fill="#4668e0"/><rect x="5.7" y="26" width="2" height="2.100" fill="#4458cb"/><rect x="7.6" y="26" width="2" height="2.100" fill="#4666dd"/><rect x="9.5" y="26" width="2" height="2.100" fill="#3f98fe"/><rect x="11.4" y="26" width="2" height="2.100" fill="#4096fe"/><rect x="13.3" y="26" width="2" height="2.100" fill="#467af2"/><rect x="15.2" y="26" width="2" height="2.100" fill="#4670e8"/><rect x="17.1" y="26" width="2" height="2.100" fill="#4563d9"/><rect x="0.0" y="28" width="2" height="2.100" fill="#4456c7"/><rect x="1.9" y="28" width="2" height="2.100" fill="#4560d6"/><rect x="3.8" y="28" width="2" height="2.100" fill="#4587fb"/><rect x="5.7" y="28" width="2" height="2.100" fill="#438efd"/><rect x="7.6" y="28" width="2" height="2.100" fill="#4666dd"/><rect x="9.5" y="28" width="2" height="2.100" fill="#4587fb"/><rect x="11.4" y="28" width="2" height="2.100" fill="#4587fb"/><rect x="13.3" y="28" width="2" height="2.100" fill="#467ff6"/><rect x="15.2" y="28" width="2" height="2.100" fill="#467df4"/><rect x="17.1" y="28" width="2" height="2.100" fill="#4584f9"/></g><g fill="none" stroke-width="1"><path d="M18.300 .5V8L11.500 14.500 8 17 1.500 19.500" stroke="#30d8c0" opacity=".95"/><path d="M4 8.500L11 14.500 13 17.500 18.500 26" stroke="#38a0f0" opacity=".7"/><path d="M3.500 26.500C6 23.500 12 22 18 27" stroke="#38a0f0" opacity=".55"/><path d="M18.300 .5V2.500" stroke="#f06020"/><path d="M18.300 2.500V5" stroke="#c8f040"/><path d="M18.300 5V8" stroke="#30e0b0"/></g></svg></div><svg style="left:36px;top:8px" width="15" height="14" viewBox="0 0 15 14"><g opacity=".55"><path d="M.8 7c1.600-3 4-4.500 6.700-4.500s5.100 1.500 6.700 4.500c-1.600 3-4 4.500-6.700 4.500s-5.100-1.500-6.700-4.500z" fill="none" stroke="#c8cacc" stroke-width="1.100"/><circle cx="7.500" cy="7" r="2.700" fill="#aeb1b5"/><path d="M1.500 11.800L13.500 2.200" stroke="#c8cacc" stroke-width="1.200"/></g></svg><div class="nm">24_03_14_03_ch2</div><svg style="left:298.800px;top:9.200px" width="14.200" height="12.300" viewBox="0 0 15 13"><rect x=".7" y=".7" width="13.600" height="11.600" rx="1.200" fill="none" stroke="#d1d2d4" stroke-width="1.400"/><circle cx="4.500" cy="4" r="1.200" fill="#d1d2d4"/><path d="M2 10.900l3.200-3 1.700 1.500 3.400-4 2.700 3v2.500z" fill="#d1d2d4"/></svg></div>
<div class="row" style="top:791px"><div class="th"><i class="abs" style="left:3px;top:0;width:19px;height:30px;background:#2d1a64"></i><svg style="left:3px;top:0" width="19" height="30" viewBox="0 0 19 30"><g fill="none" stroke-width="1"><path d="M18.300 .5V8L11.500 14.500 8 17 1.500 19.500" stroke="#3c78f0" opacity=".95"/><path d="M4 8.500L11 14.500 13 17.500 18.500 26" stroke="#3a52c8" opacity=".7"/><path d="M3.500 26.500C6 23.500 12 22 18 27" stroke="#3a52c8" opacity=".55"/><path d="M18.300 .5V2.500" stroke="#f06020"/><path d="M18.300 2.500V5" stroke="#c8f040"/><path d="M18.300 5V8" stroke="#30e0b0"/></g></svg></div><svg style="left:36px;top:9px" width="15" height="12" viewBox="0 0 15 12"><path d="M.8 6c1.600-3 4-4.500 6.700-4.500s5.100 1.500 6.700 4.500c-1.600 3-4 4.500-6.700 4.500s-5.100-1.500-6.700-4.500z" fill="none" stroke="#f0f1f2" stroke-width="1.200"/><circle cx="7.500" cy="6" r="2.900" fill="#f0f1f2"/></svg><div class="nm">24_03_14_03_ch1</div><svg style="left:298.800px;top:9.200px" width="14.200" height="12.300" viewBox="0 0 15 13"><rect x=".7" y=".7" width="13.600" height="11.600" rx="1.200" fill="none" stroke="#d1d2d4" stroke-width="1.400"/><circle cx="4.500" cy="4" r="1.200" fill="#d1d2d4"/><path d="M2 10.900l3.200-3 1.700 1.500 3.400-4 2.700 3v2.500z" fill="#d1d2d4"/></svg></div>
<div class="row" style="top:825px"><div class="th"><i class="abs" style="left:3px;top:0;width:19px;height:30px;background:#2d1a64"></i><svg style="left:3px;top:0" width="19" height="30" viewBox="0 0 19 30"><g fill="none" stroke-width="1"><path d="M18.300 .5V8L11.500 14.500 8 17 1.500 19.500" stroke="#3c78f0" opacity=".95"/><path d="M4 8.500L11 14.500 13 17.500 18.500 26" stroke="#3a52c8" opacity=".7"/><path d="M3.500 26.500C6 23.500 12 22 18 27" stroke="#3a52c8" opacity=".55"/><path d="M18.300 .5V2.500" stroke="#f06020"/><path d="M18.300 2.500V5" stroke="#c8f040"/><path d="M18.300 5V8" stroke="#30e0b0"/></g></svg></div><svg style="left:36px;top:8px" width="15" height="14" viewBox="0 0 15 14"><g opacity=".55"><path d="M.8 7c1.600-3 4-4.500 6.700-4.500s5.100 1.500 6.700 4.500c-1.600 3-4 4.500-6.700 4.500s-5.100-1.500-6.700-4.500z" fill="none" stroke="#c8cacc" stroke-width="1.100"/><circle cx="7.500" cy="7" r="2.700" fill="#aeb1b5"/><path d="M1.500 11.800L13.500 2.200" stroke="#c8cacc" stroke-width="1.200"/></g></svg><div class="nm">24_03_14_03_ch0</div><svg style="left:298.800px;top:9.200px" width="14.200" height="12.300" viewBox="0 0 15 13"><rect x=".7" y=".7" width="13.600" height="11.600" rx="1.200" fill="none" stroke="#d1d2d4" stroke-width="1.400"/><circle cx="4.500" cy="4" r="1.200" fill="#d1d2d4"/><path d="M2 10.900l3.200-3 1.700 1.500 3.400-4 2.700 3v2.500z" fill="#d1d2d4"/></svg></div>
<div class="row" style="top:859px"><div class="th"></div><svg style="left:36px;top:8px" width="15" height="14" viewBox="0 0 15 14"><g opacity=".55"><path d="M.8 7c1.600-3 4-4.500 6.700-4.500s5.100 1.500 6.700 4.500c-1.600 3-4 4.500-6.700 4.500s-5.100-1.500-6.700-4.500z" fill="none" stroke="#c8cacc" stroke-width="1.100"/><circle cx="7.500" cy="7" r="2.700" fill="#aeb1b5"/><path d="M1.500 11.800L13.500 2.200" stroke="#c8cacc" stroke-width="1.200"/></g></svg><div class="nm">24_03_14_03</div><svg style="left:298.800px;top:9.200px" width="14.200" height="12.300" viewBox="0 0 15 13"><rect x=".7" y=".7" width="13.600" height="11.600" rx="1.200" fill="none" stroke="#d1d2d4" stroke-width="1.400"/><circle cx="4.500" cy="4" r="1.200" fill="#d1d2d4"/><path d="M2 10.900l3.200-3 1.700 1.500 3.400-4 2.700 3v2.500z" fill="#d1d2d4"/></svg></div>
<!-- viewer buttons -->
<div class="btn dk" style="left:9px;top:954px"><svg width="28" height="28" viewBox="0 0 28 28"><path d="M4.200 6.400l8.100 6.500-8.100 6.500" fill="none" stroke="#d1d2d4" stroke-width="3" stroke-linecap="round" stroke-linejoin="round"/><path d="M13 20.800h10.500" stroke="#d1d2d4" stroke-width="3" stroke-linecap="round"/></svg></div>
<div class="btn dk" style="left:43px;top:954px"><svg width="28" height="28" viewBox="0 0 28 28"><rect x="5.600" y="5.700" width="16.800" height="16.600" rx="2.500" fill="none" stroke="#d1d2d4" stroke-width="3.400"/></svg></div>
<div class="btn dk" style="left:77px;top:954px"><svg width="28" height="28" viewBox="0 0 28 28"><g fill="none" stroke="#d1d2d4" stroke-width="1.800" stroke-linejoin="round"><path d="M7.300 12.300l8.600-4.300 9 4.300v9.300l-9 4.200-8.600-4.200z"/><path d="M7.300 12.300l8.600 4.300 9-4.300M15.900 16.600v9.200"/></g><path d="M7.300 12.300l8.600 4.300v9.200l-8.600-4.200z" fill="#d1d2d4"/><path d="M2.300 11.500c.3-3.300 2.300-5.300 5.300-5.800v-2.300l3.800 3.400-3.800 3.400v-2.200c-1.800.4-2.800 1.600-3.300 3.800-.5.800-1.800.6-2-.3z" fill="#d1d2d4"/></svg></div>
<div class="btn dk" style="left:111px;top:954px"><svg width="28" height="28" viewBox="0 0 28 28"><rect x="3.500" y="12.600" width="12" height="11.400" rx="1.800" fill="none" stroke="#d1d2d4" stroke-width="2.800"/><path d="M14.500 5.500l4.300-3 .3 2.600c2.900 1.500 4.500 4.300 4.700 8.300-1.400-2.800-3-4.600-5.300-5.200l.2 2.600z" fill="#d1d2d4"/></svg></div>
<div class="btn dk" style="left:145px;top:954px"><svg width="28" height="28" viewBox="0 0 28 28"><g fill="#d1d2d4"><rect x="3.600" y="3.500" width="4.400" height="4.400"/><rect x="11.800" y="3.500" width="4.400" height="4.400"/><rect x="19.700" y="3.500" width="4.400" height="4.400"/><rect x="3.600" y="11.700" width="4.400" height="4.400"/><rect x="11.800" y="11.700" width="4.400" height="4.400"/><rect x="19.700" y="11.700" width="4.400" height="4.400"/><rect x="3.600" y="19.700" width="4.400" height="4.400"/><rect x="11.800" y="19.700" width="4.400" height="4.400"/><rect x="19.700" y="19.700" width="4.400" height="4.400"/></g></svg></div>
<div class="btn dk" style="left:179px;top:954px"><svg width="28" height="28" viewBox="0 0 28 28"><path d="M14 3.300L24.400 13.900H21.700V24.500H16.200V17.200H11.800V24.500H6.300V13.900H3.600zM19.500 4.600h2.700v6l-2.700-2.700z" fill="#d1d2d4" stroke="#d1d2d4" stroke-width=".8" stroke-linejoin="round"/></svg></div>
<svg class="abs" style="left:351px;top:27px" width="861" height="915" viewBox="351 27 861 915">
<defs>
<filter id="tb" x="350" y="27" width="865" height="915" color-interpolation-filters="sRGB" filterUnits="userSpaceOnUse" primitiveUnits="userSpaceOnUse"><feTurbulence type="fractalNoise" baseFrequency="0.37 0.31" numOctaves="1" seed="11" result="n"/><feColorMatrix in="n" type="matrix" values="1 0 0 0 0 1 0 0 0 0 1 0 0 0 0 0 0 0 0 1" result="ng"/><feComposite in="SourceGraphic" in2="ng" operator="arithmetic" k1="0" k2="1" k3="0.024" k4="-0.012" result="s"/><feFlood x="352" y="29" width="1" height="1" flood-color="#000" result="dot"/><feOffset in="dot" dx="0" dy="0" x="350" y="27" width="5" height="5" result="cell"/><feTile in="cell" x="350" y="27" width="865" height="915" result="grid"/><feComposite in="s" in2="grid" operator="in" result="samp"/><feMorphology in="samp" operator="dilate" radius="2" result="mos"/><feComponentTransfer in="mos"><feFuncR type="table" tableValues="0.190 0.213 0.232 0.248 0.261 0.270 0.275 0.277 0.275 0.269 0.249 0.220 0.186 0.152 0.122 0.100 0.093 0.103 0.135 0.185 0.248 0.320 0.397 0.474 0.547 0.611 0.664 0.716 0.766 0.814 0.859 0.899 0.933 0.960 0.980 0.992 0.997 0.995 0.988 0.975 0.958 0.936 0.910 0.881 0.847 0.808 0.765 0.717 0.664 0.607 0.546 0.480"/><feFuncG type="table" tableValues="0.072 0.129 0.186 0.241 0.296 0.349 0.401 0.452 0.501 0.550 0.599 0.649 0.698 0.745 0.789 0.830 0.866 0.896 0.922 0.945 0.964 0.980 0.991 0.998 0.999 0.995 0.985 0.969 0.946 0.919 0.887 0.851 0.812 0.772 0.730 0.684 0.632 0.575 0.517 0.457 0.400 0.345 0.296 0.253 0.214 0.178 0.144 0.113 0.084 0.059 0.036 0.016"/><feFuncB type="table" tableValues="0.232 0.373 0.500 0.613 0.712 0.796 0.867 0.923 0.966 0.993 0.998 0.984 0.955 0.914 0.866 0.814 0.762 0.715 0.666 0.607 0.543 0.477 0.411 0.350 0.296 0.253 0.224 0.208 0.203 0.206 0.212 0.220 0.227 0.228 0.222 0.207 0.187 0.164 0.139 0.113 0.088 0.066 0.048 0.035 0.025 0.017 0.010 0.006 0.004 0.004 0.006 0.011"/></feComponentTransfer></filter>
<filter id="b3" x="-50%" y="-50%" width="200%" height="200%" filterUnits="objectBoundingBox"><feGaussianBlur stdDeviation="3"/></filter>
<filter id="b5" x="-50%" y="-50%" width="200%" height="200%" filterUnits="objectBoundingBox"><feGaussianBlur stdDeviation="5"/></filter>
<filter id="b8" x="-50%" y="-50%" width="200%" height="200%" filterUnits="objectBoundingBox"><feGaussianBlur stdDeviation="8"/></filter>
<filter id="b11" x="-50%" y="-50%" width="200%" height="200%" filterUnits="objectBoundingBox"><feGaussianBlur stdDeviation="11"/></filter>
<filter id="b14" x="-50%" y="-50%" width="200%" height="200%" filterUnits="objectBoundingBox"><feGaussianBlur stdDeviation="14"/></filter>
<filter id="b20" x="-50%" y="-50%" width="200%" height="200%" filterUnits="objectBoundingBox"><feGaussianBlur stdDeviation="20"/></filter>
<filter id="b28" x="-50%" y="-50%" width="200%" height="200%" filterUnits="objectBoundingBox"><feGaussianBlur stdDeviation="28"/></filter>
<filter id="b45" x="-50%" y="-50%" width="200%" height="200%" filterUnits="objectBoundingBox"><feGaussianBlur stdDeviation="45"/></filter>
</defs>
<g filter="url(#tb)">
<rect x="350" y="27" width="866" height="915" fill="#040404"/>
<path d="M363 911L366 908L369 904L372 900L376 895L380 890L385 885L390 879L396 872L402 864L409 855L417 845L426 835L437 822L448 808L460 794L474 778L487 761L502 744L516 726L531 708L546 690L560 673L574 656L587 640L600 624L613 607L626 591L639 575L651 558L664 541L677 525L690 508L704 491L717 474L730 458L742 442L755 426L768 410L781 393L794 377L807 360L820 344L832 328L845 312L858 297L870 282L882 267L894 253L906 240L918 227L929 216L940 205L949 196L958 188L966 180L973 173L980 167L986 162L992 156L998 149L1005 142L1013 133L1021 124L1030 115L1038 105L1047 95L1056 85L1064 75L1073 65L1081 55L1090 46L1098 37L1105 28L1113 19L1121 10L1128 2L1136 -7L1143 -15L1150 -23L1156 -30L1162 -36L1167 -42L1172 -48L1175 -52L1397 135L1393 140L1389 145L1384 151L1378 158L1372 165L1366 173L1359 181L1351 190L1344 199L1336 208L1329 217L1322 226L1314 235L1307 244L1299 253L1291 264L1282 274L1273 285L1264 295L1255 306L1246 317L1237 328L1228 339L1218 350L1208 361L1198 371L1189 380L1181 388L1173 396L1165 403L1159 410L1152 416L1146 423L1139 430L1132 438L1124 447L1116 458L1106 470L1095 484L1085 498L1073 513L1061 529L1049 545L1037 561L1025 578L1012 595L1000 611L988 628L975 644L963 660L951 677L939 693L927 710L914 727L901 745L889 762L876 779L863 797L850 814L837 832L823 850L809 868L795 886L780 905L766 924L751 942L737 960L724 977L711 993L699 1008L689 1022L679 1035L670 1046L662 1056L655 1065L649 1073L643 1080L638 1087L634 1093L630 1098L626 1102L623 1106L620 1110L617 1113Z" fill="#fff" fill-opacity="0.018" filter="url(#b28)"/>
<path d="M394 936L397 932L400 929L403 925L407 920L411 915L415 909L420 903L426 895L432 887L439 878L447 868L455 857L465 845L476 831L488 815L500 799L514 782L527 764L541 746L555 727L569 709L583 691L596 673L609 657L620 639L631 621L642 604L654 586L665 568L680 553L700 541L719 529L738 517L757 505L774 491L790 478L807 465L822 451L835 434L848 418L862 402L875 386L888 370L900 354L911 339L922 323L933 309L944 295L955 282L965 270L974 259L983 249L992 239L1000 231L1007 223L1014 216L1020 208L1026 201L1032 194L1039 186L1046 178L1053 168L1061 158L1068 147L1076 137L1084 126L1092 115L1100 105L1107 94L1115 84L1122 73L1129 63L1135 53L1141 43L1147 33L1153 23L1159 13L1165 4L1170 -5L1175 -14L1180 -21L1184 -28L1188 -34L1191 -39L1382 122L1378 126L1373 131L1368 137L1362 144L1355 151L1348 158L1341 166L1333 175L1325 183L1317 192L1309 200L1301 209L1293 217L1285 226L1277 235L1268 245L1259 255L1250 265L1240 275L1231 286L1222 296L1212 307L1203 317L1193 327L1184 337L1174 347L1165 356L1157 364L1149 371L1141 378L1134 385L1127 391L1120 398L1112 406L1105 414L1096 423L1087 434L1076 447L1065 460L1054 474L1042 489L1029 504L1017 520L1004 536L991 552L978 569L965 585L952 601L940 617L927 633L914 649L902 665L889 682L875 699L862 715L849 732L836 749L822 766L809 783L795 800L782 817L767 835L753 853L738 872L723 890L709 908L695 926L681 943L668 959L656 974L645 987L635 1000L626 1011L618 1021L611 1029L604 1037L598 1045L593 1051L589 1057L585 1062L581 1066L578 1070L575 1074L572 1077Z" fill="#fff" fill-opacity="0.04" filter="url(#b28)"/>
<path d="M455 984L457 980L460 977L464 973L467 968L471 963L476 957L481 951L487 944L493 936L500 927L508 917L517 906L526 894L538 880L550 865L563 849L576 832L591 814L605 796L620 778L634 760L648 742L662 725L676 708L689 691L702 675L714 658L727 641L740 624L753 607L766 591L779 574L792 557L804 540L816 523L828 507L840 490L852 473L864 456L877 440L889 423L902 407L914 391L927 375L939 361L952 347L964 334L976 322L987 310L998 300L1008 291L1017 282L1026 275L1035 267L1043 261L1051 254L1058 247L1065 239L1071 231L1078 222L1085 213L1093 202L1100 192L1108 181L1116 170L1123 159L1131 148L1139 137L1147 127L1156 117L1164 108L1171 99L1179 90L1186 81L1194 72L1201 63L1208 55L1216 46L1222 39L1228 31L1234 24L1239 18L1244 13L1247 9L1339 86L1335 91L1331 96L1326 102L1320 109L1314 116L1307 124L1300 132L1293 141L1285 150L1278 159L1270 168L1263 176L1255 185L1247 194L1238 203L1230 213L1220 223L1211 233L1202 243L1192 252L1182 262L1172 271L1162 280L1152 290L1143 299L1135 308L1127 316L1119 324L1111 332L1104 340L1097 347L1090 355L1083 363L1075 371L1067 381L1058 391L1048 403L1038 416L1027 430L1016 445L1004 460L992 476L980 492L967 508L954 525L942 541L929 558L917 574L904 590L892 606L879 623L867 639L854 656L841 673L829 690L816 707L803 724L790 742L777 759L764 776L750 793L736 811L722 829L707 847L692 865L678 883L664 901L650 918L637 934L625 949L614 963L604 976L596 987L588 997L581 1005L574 1014L568 1021L563 1027L559 1033L555 1038L551 1043L548 1047L545 1050L542 1054Z" fill="#fff" fill-opacity="0.35" filter="url(#b20)"/>
<path d="M753 687L756 663L760 639L773 622L785 605L798 588L811 571L823 555L835 538L848 522L860 505L873 489L885 472L898 455L910 439L922 423L935 407L947 391L958 376L970 361L981 348L991 335L1001 323L1011 312L1020 303L1029 294L1037 286L1045 278L1053 271L1060 263L1067 256L1075 249L1082 241L1090 233L1098 224L1106 214L1115 204L1123 194L1132 184L1141 174L1149 163L1158 153L1166 143L1174 133L1182 124L1190 115L1197 106L1205 97L1212 88L1220 79L1227 70L1234 62L1241 54L1247 47L1253 40L1258 34L1262 29L1266 24L1314 66L1311 70L1306 75L1301 81L1296 88L1289 95L1283 103L1276 111L1268 120L1261 129L1253 138L1246 147L1238 155L1231 164L1223 174L1215 183L1206 193L1198 204L1189 214L1180 225L1171 235L1162 245L1154 255L1145 265L1136 275L1128 284L1119 293L1111 301L1103 308L1096 316L1088 323L1081 330L1073 338L1065 346L1057 355L1048 364L1039 375L1029 387L1018 400L1007 414L995 429L983 444L971 460L959 476L946 492L934 509L921 526L909 542L896 558L884 575L871 591L859 607L846 624L834 641L821 658L808 675L787 686L764 695Z" fill="#fff" fill-opacity="0.055" filter="url(#b14)"/>
<ellipse cx="1235" cy="15" rx="130" ry="90" transform="rotate(0 1235 15)" fill="#fff" fill-opacity="0.1" filter="url(#b45)"/>
<ellipse cx="717" cy="612" rx="27" ry="16" transform="rotate(-8 717 612)" fill="#fff" fill-opacity="0.22" filter="url(#b8)"/>
<ellipse cx="692" cy="652" rx="55" ry="45" transform="rotate(0 692 652)" fill="#fff" fill-opacity="0.035" filter="url(#b20)"/>
<path d="M722 622 L752 650" fill="none" stroke="#fff" stroke-width="20" stroke-opacity="0.13" filter="url(#b8)" />
<ellipse cx="945" cy="440" rx="80" ry="24" transform="rotate(-53 945 440)" fill="#fff" fill-opacity="0.14" filter="url(#b14)"/>
<ellipse cx="1150" cy="205" rx="70" ry="16" transform="rotate(-49 1150 205)" fill="#fff" fill-opacity="0.08" filter="url(#b14)"/>
<ellipse cx="1207" cy="115" rx="40" ry="14" transform="rotate(-49 1207 115)" fill="#fff" fill-opacity="0.08" filter="url(#b14)"/>
<ellipse cx="1005" cy="368" rx="22" ry="14" transform="rotate(-49 1005 368)" fill="#fff" fill-opacity="0.05" filter="url(#b8)"/>
<ellipse cx="832" cy="615" rx="60" ry="24" transform="rotate(-53 832 615)" fill="#fff" fill-opacity="0.09" filter="url(#b14)"/>
<ellipse cx="590" cy="890" rx="50" ry="14" transform="rotate(-52 590 890)" fill="#fff" fill-opacity="0.05" filter="url(#b14)"/>
<ellipse cx="764" cy="726" rx="7" ry="7" transform="rotate(0 764 726)" fill="#fff" fill-opacity="0.08" filter="url(#b3)"/>
<ellipse cx="692" cy="768" rx="7" ry="7" transform="rotate(0 692 768)" fill="#fff" fill-opacity="0.07" filter="url(#b3)"/>
<ellipse cx="1098" cy="242" rx="12" ry="7" transform="rotate(-45 1098 242)" fill="#fff" fill-opacity="0.1" filter="url(#b5)"/>
<ellipse cx="829" cy="636" rx="21" ry="27" transform="rotate(22 829 636)" fill="#fff" fill-opacity="0.27" filter="url(#b5)"/>
<ellipse cx="829" cy="636" rx="15" ry="20" transform="rotate(22 829 636)" fill="#fff" fill-opacity="0.3" filter="url(#b3)"/>
<ellipse cx="830" cy="634" rx="10" ry="14" transform="rotate(22 830 634)" fill="#fff" fill-opacity="0.4" filter="url(#b3)"/>
<ellipse cx="825" cy="642" rx="6" ry="5" transform="rotate(0 825 642)" fill="#fff" fill-opacity="0.6" filter="url(#b3)"/>
<ellipse cx="833" cy="627" rx="5" ry="6" transform="rotate(0 833 627)" fill="#fff" fill-opacity="0.15" filter="url(#b3)"/>
<ellipse cx="893.5" cy="524" rx="13" ry="13" transform="rotate(0 893.5 524)" fill="#fff" fill-opacity="0.2" filter="url(#b3)"/>
<ellipse cx="893.5" cy="524" rx="8" ry="8.5" transform="rotate(0 893.5 524)" fill="#fff" fill-opacity="0.5" filter="url(#b3)"/>
</g>
<path d="M1061.08 282.39h4.44v4.43h-4.44zM1061.08 286.82h4.44v4.43h-4.44zM1065.52 277.96h4.44v4.43h-4.44zM1065.52 291.25h4.44v4.43h-4.44zM1069.96 273.53h4.44v4.43h-4.44zM1069.96 295.68h4.44v4.43h-4.44zM1074.39 273.53h4.44v4.43h-4.44zM1074.39 295.68h4.44v4.43h-4.44zM1078.83 264.67h4.44v4.43h-4.44zM1078.83 269.10h4.44v4.43h-4.44zM1078.83 277.96h4.44v4.43h-4.44zM1078.83 291.25h4.44v4.43h-4.44zM1083.27 255.81h4.44v4.43h-4.44zM1083.27 260.24h4.44v4.43h-4.44zM1083.27 273.53h4.44v4.43h-4.44zM1083.27 282.39h4.44v4.43h-4.44zM1083.27 286.82h4.44v4.43h-4.44zM1087.71 251.38h4.44v4.43h-4.44zM1087.71 277.96h4.44v4.43h-4.44zM1092.15 242.52h4.44v4.43h-4.44zM1092.15 246.95h4.44v4.43h-4.44zM1092.15 277.96h4.44v4.43h-4.44zM1096.58 238.09h4.44v4.43h-4.44zM1096.58 273.53h4.44v4.43h-4.44zM1101.02 193.79h4.44v4.43h-4.44zM1101.02 198.22h4.44v4.43h-4.44zM1101.02 224.80h4.44v4.43h-4.44zM1101.02 233.66h4.44v4.43h-4.44zM1101.02 269.10h4.44v4.43h-4.44zM1105.46 184.93h4.44v4.43h-4.44zM1105.46 189.36h4.44v4.43h-4.44zM1105.46 202.65h4.44v4.43h-4.44zM1105.46 207.08h4.44v4.43h-4.44zM1105.46 211.51h4.44v4.43h-4.44zM1105.46 215.94h4.44v4.43h-4.44zM1105.46 220.37h4.44v4.43h-4.44zM1105.46 229.23h4.44v4.43h-4.44zM1105.46 264.67h4.44v4.43h-4.44zM1109.90 180.50h4.44v4.43h-4.44zM1109.90 260.24h4.44v4.43h-4.44zM1114.34 176.07h4.44v4.43h-4.44zM1114.34 255.81h4.44v4.43h-4.44zM1118.77 180.50h4.44v4.43h-4.44zM1118.77 251.38h4.44v4.43h-4.44zM1123.21 184.93h4.44v4.43h-4.44zM1123.21 246.95h4.44v4.43h-4.44zM1127.65 180.50h4.44v4.43h-4.44zM1127.65 242.52h4.44v4.43h-4.44zM1132.09 184.93h4.44v4.43h-4.44zM1132.09 238.09h4.44v4.43h-4.44zM1136.53 184.93h4.44v4.43h-4.44zM1136.53 233.66h4.44v4.43h-4.44zM1140.96 189.36h4.44v4.43h-4.44zM1140.96 202.65h4.44v4.43h-4.44zM1140.96 211.51h4.44v4.43h-4.44zM1140.96 229.23h4.44v4.43h-4.44zM1145.40 184.93h4.44v4.43h-4.44zM1145.40 193.79h4.44v4.43h-4.44zM1145.40 198.22h4.44v4.43h-4.44zM1145.40 207.08h4.44v4.43h-4.44zM1145.40 215.94h4.44v4.43h-4.44zM1145.40 220.37h4.44v4.43h-4.44zM1145.40 224.80h4.44v4.43h-4.44zM1149.84 189.36h4.44v4.43h-4.44zM1154.28 193.79h4.44v4.43h-4.44z" fill="#d83cc0" fill-opacity="1" shape-rendering="crispEdges"/>
<path d="M1043.33 308.97h4.44v4.43h-4.44zM1047.77 304.54h4.44v4.43h-4.44zM1047.77 313.40h4.44v4.43h-4.44zM1052.20 300.11h4.44v4.43h-4.44zM1052.20 317.83h4.44v4.43h-4.44zM1056.64 304.54h4.44v4.43h-4.44zM1056.64 313.40h4.44v4.43h-4.44zM1061.08 308.97h4.44v4.43h-4.44z" fill="#2c1a78" fill-opacity="1" shape-rendering="crispEdges"/>
<path d="M990.07 357.70h4.44v4.43h-4.44zM994.51 353.27h4.44v4.43h-4.44zM994.51 362.13h4.44v4.43h-4.44zM998.95 348.84h4.44v4.43h-4.44zM998.95 366.56h4.44v4.43h-4.44zM1003.39 344.41h4.44v4.43h-4.44zM1003.39 362.13h4.44v4.43h-4.44zM1007.82 348.84h4.44v4.43h-4.44zM1007.82 357.70h4.44v4.43h-4.44zM1012.26 353.27h4.44v4.43h-4.44z" fill="#c0b440" fill-opacity="0.95" shape-rendering="crispEdges"/>
<path d="M879.12 486.17h4.44v4.43h-4.44zM883.56 477.31h4.44v4.43h-4.44zM883.56 481.74h4.44v4.43h-4.44zM883.56 490.60h4.44v4.43h-4.44zM888.00 472.88h4.44v4.43h-4.44zM888.00 495.03h4.44v4.43h-4.44zM892.44 468.45h4.44v4.43h-4.44zM892.44 495.03h4.44v4.43h-4.44zM896.87 455.16h4.44v4.43h-4.44zM896.87 464.02h4.44v4.43h-4.44zM896.87 481.74h4.44v4.43h-4.44zM896.87 499.46h4.44v4.43h-4.44zM896.87 503.89h4.44v4.43h-4.44zM901.31 450.73h4.44v4.43h-4.44zM901.31 459.59h4.44v4.43h-4.44zM901.31 477.31h4.44v4.43h-4.44zM901.31 486.17h4.44v4.43h-4.44zM901.31 508.32h4.44v4.43h-4.44zM901.31 512.75h4.44v4.43h-4.44zM905.75 446.30h4.44v4.43h-4.44zM905.75 477.31h4.44v4.43h-4.44zM905.75 481.74h4.44v4.43h-4.44zM905.75 517.18h4.44v4.43h-4.44zM905.75 521.61h4.44v4.43h-4.44zM910.19 446.30h4.44v4.43h-4.44zM910.19 472.88h4.44v4.43h-4.44zM910.19 486.17h4.44v4.43h-4.44zM910.19 526.04h4.44v4.43h-4.44zM914.63 428.58h4.44v4.43h-4.44zM914.63 433.01h4.44v4.43h-4.44zM914.63 441.87h4.44v4.43h-4.44zM914.63 472.88h4.44v4.43h-4.44zM914.63 490.60h4.44v4.43h-4.44zM914.63 495.03h4.44v4.43h-4.44zM914.63 499.46h4.44v4.43h-4.44zM914.63 530.47h4.44v4.43h-4.44zM919.06 410.86h4.44v4.43h-4.44zM919.06 415.29h4.44v4.43h-4.44zM919.06 419.72h4.44v4.43h-4.44zM919.06 424.15h4.44v4.43h-4.44zM919.06 437.44h4.44v4.43h-4.44zM919.06 468.45h4.44v4.43h-4.44zM919.06 503.89h4.44v4.43h-4.44zM919.06 508.32h4.44v4.43h-4.44zM919.06 512.75h4.44v4.43h-4.44zM919.06 526.04h4.44v4.43h-4.44zM923.50 406.43h4.44v4.43h-4.44zM923.50 468.45h4.44v4.43h-4.44zM923.50 517.18h4.44v4.43h-4.44zM923.50 521.61h4.44v4.43h-4.44zM927.94 402.00h4.44v4.43h-4.44zM927.94 472.88h4.44v4.43h-4.44zM932.38 397.57h4.44v4.43h-4.44zM932.38 468.45h4.44v4.43h-4.44zM936.82 397.57h4.44v4.43h-4.44zM936.82 468.45h4.44v4.43h-4.44zM941.25 402.00h4.44v4.43h-4.44zM941.25 464.02h4.44v4.43h-4.44zM945.69 397.57h4.44v4.43h-4.44zM945.69 459.59h4.44v4.43h-4.44zM950.13 393.14h4.44v4.43h-4.44zM950.13 455.16h4.44v4.43h-4.44zM954.57 384.28h4.44v4.43h-4.44zM954.57 388.71h4.44v4.43h-4.44zM954.57 450.73h4.44v4.43h-4.44zM959.01 379.85h4.44v4.43h-4.44zM959.01 450.73h4.44v4.43h-4.44zM963.44 375.42h4.44v4.43h-4.44zM963.44 450.73h4.44v4.43h-4.44zM967.88 379.85h4.44v4.43h-4.44zM967.88 450.73h4.44v4.43h-4.44zM972.32 370.99h4.44v4.43h-4.44zM972.32 375.42h4.44v4.43h-4.44zM972.32 433.01h4.44v4.43h-4.44zM972.32 446.30h4.44v4.43h-4.44zM976.76 366.56h4.44v4.43h-4.44zM976.76 419.72h4.44v4.43h-4.44zM976.76 424.15h4.44v4.43h-4.44zM976.76 428.58h4.44v4.43h-4.44zM976.76 437.44h4.44v4.43h-4.44zM976.76 441.87h4.44v4.43h-4.44zM981.20 362.13h4.44v4.43h-4.44zM981.20 415.29h4.44v4.43h-4.44zM985.63 366.56h4.44v4.43h-4.44zM985.63 379.85h4.44v4.43h-4.44zM985.63 410.86h4.44v4.43h-4.44zM990.07 370.99h4.44v4.43h-4.44zM990.07 375.42h4.44v4.43h-4.44zM990.07 384.28h4.44v4.43h-4.44zM990.07 406.43h4.44v4.43h-4.44zM994.51 388.71h4.44v4.43h-4.44zM994.51 402.00h4.44v4.43h-4.44zM998.95 393.14h4.44v4.43h-4.44zM998.95 397.57h4.44v4.43h-4.44z" fill="#0428e8" fill-opacity="1" shape-rendering="crispEdges"/>
<path d="M998.95 441.87h4.44v4.43h-4.44zM1003.39 437.44h4.44v4.43h-4.44zM1003.39 446.30h4.44v4.43h-4.44zM1007.82 428.58h4.44v4.43h-4.44zM1007.82 433.01h4.44v4.43h-4.44zM1007.82 450.73h4.44v4.43h-4.44zM1012.26 424.15h4.44v4.43h-4.44zM1012.26 446.30h4.44v4.43h-4.44zM1016.70 419.72h4.44v4.43h-4.44zM1016.70 441.87h4.44v4.43h-4.44zM1021.14 424.15h4.44v4.43h-4.44zM1021.14 433.01h4.44v4.43h-4.44zM1021.14 437.44h4.44v4.43h-4.44zM1025.58 428.58h4.44v4.43h-4.44z" fill="#a8e88c" fill-opacity="1" shape-rendering="crispEdges"/>
<path d="M825.87 534.90h4.44v4.43h-4.44zM830.30 530.47h4.44v4.43h-4.44zM830.30 539.33h4.44v4.43h-4.44zM834.74 526.04h4.44v4.43h-4.44zM834.74 543.76h4.44v4.43h-4.44zM839.18 521.61h4.44v4.43h-4.44zM839.18 548.19h4.44v4.43h-4.44zM843.62 517.18h4.44v4.43h-4.44zM843.62 548.19h4.44v4.43h-4.44zM848.06 521.61h4.44v4.43h-4.44zM848.06 543.76h4.44v4.43h-4.44zM852.49 517.18h4.44v4.43h-4.44zM852.49 539.33h4.44v4.43h-4.44zM856.93 512.75h4.44v4.43h-4.44zM856.93 534.90h4.44v4.43h-4.44zM861.37 508.32h4.44v4.43h-4.44zM861.37 526.04h4.44v4.43h-4.44zM861.37 530.47h4.44v4.43h-4.44zM865.81 512.75h4.44v4.43h-4.44zM865.81 521.61h4.44v4.43h-4.44zM870.25 517.18h4.44v4.43h-4.44z" fill="#a860a8" fill-opacity="1" shape-rendering="crispEdges"/>
<path d="M812.55 614.64h4.44v4.43h-4.44zM816.99 610.21h4.44v4.43h-4.44zM816.99 619.07h4.44v4.43h-4.44zM821.43 605.78h4.44v4.43h-4.44zM821.43 623.50h4.44v4.43h-4.44zM825.87 601.35h4.44v4.43h-4.44zM825.87 627.93h4.44v4.43h-4.44zM830.30 596.92h4.44v4.43h-4.44zM830.30 632.36h4.44v4.43h-4.44zM834.74 596.92h4.44v4.43h-4.44zM834.74 636.79h4.44v4.43h-4.44zM839.18 596.92h4.44v4.43h-4.44zM839.18 632.36h4.44v4.43h-4.44zM843.62 592.49h4.44v4.43h-4.44zM843.62 632.36h4.44v4.43h-4.44zM848.06 596.92h4.44v4.43h-4.44zM848.06 627.93h4.44v4.43h-4.44zM852.49 601.35h4.44v4.43h-4.44zM852.49 605.78h4.44v4.43h-4.44zM852.49 632.36h4.44v4.43h-4.44zM856.93 610.21h4.44v4.43h-4.44zM856.93 632.36h4.44v4.43h-4.44zM861.37 614.64h4.44v4.43h-4.44zM861.37 619.07h4.44v4.43h-4.44zM861.37 627.93h4.44v4.43h-4.44zM865.81 623.50h4.44v4.43h-4.44z" fill="#9a5a30" fill-opacity="1" shape-rendering="crispEdges"/>
<path d="M683.85 805.13h4.44v4.43h-4.44zM688.29 800.70h4.44v4.43h-4.44zM688.29 809.56h4.44v4.43h-4.44zM692.73 796.27h4.44v4.43h-4.44zM692.73 813.99h4.44v4.43h-4.44zM697.16 791.84h4.44v4.43h-4.44zM697.16 809.56h4.44v4.43h-4.44zM701.60 791.84h4.44v4.43h-4.44zM701.60 813.99h4.44v4.43h-4.44zM706.04 796.27h4.44v4.43h-4.44zM706.04 809.56h4.44v4.43h-4.44zM710.48 800.70h4.44v4.43h-4.44zM710.48 805.13h4.44v4.43h-4.44z" fill="#62b4dc" fill-opacity="1" shape-rendering="crispEdges"/>
</svg><!-- right dock 1 -->
<svg class="abs" style="left:1230px;top:30px" width="44" height="11" viewBox="0 0 44 11"><g stroke="#d1d2d4" fill="none" stroke-width="1.200"><path d="M3 2.400l5.400 5.400M8.400 2.400l-5.400 5.400" stroke-width="1.300"/><ellipse cx="22" cy="5.300" rx="2.500" ry="1.700" fill="#d1d2d4" fill-opacity=".7"/><path d="M18.800 6.900 L25.300 3.300"/><rect x="35.200" y="2.800" width="4.400" height="4.400" stroke-width="1.400"/><path d="M36.800 8.500 h4.200 v-4.200" stroke-width="1.200"/></g></svg>
<div class="dline" style="left:1278px;top:35px;width:430px"></div>
<div class="dtitle" style="left:1700px;width:204px;top:28px"><span><span style="letter-spacing:-0.42px">ROIs profiles (domb-napari)</span></span></div>
<div class="t" style="left:1235.400px;top:56.400px"><span style="letter-spacing:0.05px">img</span></div>
<div class="combo dk" style="left:1357px;top:53px;width:553.500px;height:25px"><div class="t" style="left:8.500px;top:3.400px;letter-spacing:-0.35px">24_03_14_03_ch1</div><i class="arrow" style="left:534.500px;top:8.500px"></i></div>
<div class="t" style="left:1235.400px;top:87px"><span style="letter-spacing:0.02px">labels</span></div>
<div class="combo dk" style="left:1357px;top:84.300px;width:553.500px;height:25px"><div class="t" style="left:8.500px;top:2.700px"><span style="letter-spacing:-0.07px">24_03_14_03_Eapp_norm_red-green_up-labels</span></div><i class="arrow" style="left:534.500px;top:8.500px"></i></div>
<div class="t" style="left:1235.400px;top:114.500px"><span style="letter-spacing:0.01px">time scale</span></div>
<div class="spin dk" style="left:1357px;top:115px;width:553.5px"><i class="m" style="left:5px;top:9.300px;width:10px;height:1.500px;background:#868e93"></i><i class="p" style="left:538.5px;top:9.300px;width:10px;height:1.500px;background:#868e93"></i><i class="p" style="left:542.8px;top:5px;width:1.500px;height:10px;background:#868e93"></i><div class="t" style="left:32.700px;top:1px;letter-spacing:0">5,00</div></div>
<div class="chk dk" style="left:1231px;top:142px"></div><div class="t" style="left:1254.300px;top:141.800px"><span style="letter-spacing:0.28px">absolute intensity</span></div>
<div class="t" style="left:1235.400px;top:166.700px"><span style="letter-spacing:0.12px">ΔF win</span></div>
<div class="spin dk" style="left:1357px;top:167px;width:553.5px"><i class="m" style="left:5px;top:9.300px;width:10px;height:1.500px;background:#868e93"></i><i class="p" style="left:538.5px;top:9.300px;width:10px;height:1.500px;background:#868e93"></i><i class="p" style="left:542.8px;top:5px;width:1.500px;height:10px;background:#868e93"></i><div class="t" style="left:32.700px;top:1px;letter-spacing:0">5</div></div>
<div class="t" style="left:1235.400px;top:195.500px"><span style="letter-spacing:0.12px">ΔF aplitude lim</span></div>
<div class="spin dk" style="left:1357px;top:195.5px;width:228px"><i class="m" style="left:5px;top:9.300px;width:10px;height:1.500px;background:#868e93"></i><i class="p" style="left:213px;top:9.300px;width:10px;height:1.500px;background:#868e93"></i><i class="p" style="left:217.3px;top:5px;width:1.500px;height:10px;background:#868e93"></i><div class="t" style="left:32.700px;top:1px;letter-spacing:0">10,00</div></div>
<div class="spin dk" style="left:1591px;top:195.5px;width:228px"><i class="m" style="left:5px;top:9.300px;width:10px;height:1.500px;background:#868e93"></i><i class="p" style="left:213px;top:9.300px;width:10px;height:1.500px;background:#868e93"></i><i class="p" style="left:217.3px;top:5px;width:1.500px;height:10px;background:#868e93"></i><div class="t" style="left:32.700px;top:1px;letter-spacing:0">10,00</div></div>
<div class="pbtn" style="left:1825px;top:193.200px;width:40px;height:24px;line-height:24px">+</div>
<div class="pbtn" style="left:1871px;top:193.200px;width:39.500px;height:24px;line-height:24px">-</div>
<div class="chk dk" style="left:1231px;top:225px"></div><div class="t" style="left:1254.300px;top:224.800px"><span style="letter-spacing:0.25px">profiles crop</span></div>
<div class="t" style="left:1235.400px;top:252.500px"><span style="letter-spacing:0.26px">profiles range</span></div>
<div class="spin dk" style="left:1357px;top:252.5px;width:228px"><i class="m" style="left:5px;top:9.300px;width:10px;height:1.500px;background:#868e93"></i><i class="p" style="left:213px;top:9.300px;width:10px;height:1.500px;background:#868e93"></i><i class="p" style="left:217.3px;top:5px;width:1.500px;height:10px;background:#868e93"></i><div class="t" style="left:32.700px;top:1px;letter-spacing:0">0</div></div>
<div class="spin dk" style="left:1591px;top:252.5px;width:228px"><i class="m" style="left:5px;top:9.300px;width:10px;height:1.500px;background:#868e93"></i><i class="p" style="left:213px;top:9.300px;width:10px;height:1.500px;background:#868e93"></i><i class="p" style="left:217.3px;top:5px;width:1.500px;height:10px;background:#868e93"></i><div class="t" style="left:32.700px;top:1px;letter-spacing:0">10</div></div>
<div class="pbtn" style="left:1825px;top:250.200px;width:40px;height:24.400px;line-height:24px">+</div>
<div class="pbtn" style="left:1871px;top:250.200px;width:39.500px;height:24.400px;line-height:24px">-</div>
<div class="chk dk" style="left:1231px;top:281.700px"></div><div class="t" style="left:1254.300px;top:281.700px"><span style="letter-spacing:-0.04px">save data frame</span></div>
<div class="t" style="left:1235.400px;top:310.200px"><span style="letter-spacing:0.02px">saving path</span></div>
<div class="abs" style="left:1357px;top:307.200px;width:423px;height:23.500px;background:#1e2025;border-radius:2px"><div class="t" style="left:3.700px;top:3px"><span style="letter-spacing:0.47px">/home/wisstock/bio/scripts/domb-tools</span></div></div>
<div class="pbtn" style="left:1786px;top:307.200px;width:124.500px;height:24px;line-height:25.500px"><span style="letter-spacing:0.10px">Choose directory</span></div>
<div class="pbtn" style="left:1230px;top:338px;width:680.500px;height:24.300px;line-height:25px"><span style="letter-spacing:0.18px">Build Profiles</span></div>
<svg class="abs" style="left:1561px;top:370.500px" width="18" height="6"><g fill="#f0f1f2"><circle cx="2.500" cy="3" r="1.250"/><circle cx="9" cy="3" r="1.250"/><circle cx="15.500" cy="3" r="1.250"/></g></svg>
<!-- right dock 2 -->
<svg class="abs" style="left:1230px;top:381.5px" width="44" height="11" viewBox="0 0 44 11"><g stroke="#d1d2d4" fill="none" stroke-width="1.200"><path d="M3 2.400l5.400 5.400M8.400 2.400l-5.400 5.400" stroke-width="1.300"/><ellipse cx="22" cy="5.300" rx="2.500" ry="1.700" fill="#d1d2d4" fill-opacity=".7"/><path d="M18.800 6.900 L25.300 3.300"/><rect x="35.200" y="2.800" width="4.400" height="4.400" stroke-width="1.400"/><path d="M36.800 8.500 h4.200 v-4.200" stroke-width="1.200"/></g></svg>
<div class="dline" style="left:1278px;top:386.500px;width:550px"></div>
<div class="dtitle" style="left:1800px;width:105px;top:379.500px;height:16px"><span><span style="letter-spacing:-0.77px">ROIs Prof.</span></span></div>
<svg class="abs" style="left:340px;top:497px" width="8" height="20"><g fill="#f0f1f2"><circle cx="4" cy="3" r="1.100"/><circle cx="4" cy="9.500" r="1.100"/><circle cx="4" cy="16" r="1.100"/></g></svg>
<svg class="abs" style="left:1214px;top:497px" width="8" height="20"><g fill="#f0f1f2"><circle cx="4" cy="3" r="1.100"/><circle cx="4" cy="9.500" r="1.100"/><circle cx="4" cy="16" r="1.100"/></g></svg>
<div class="t" style="left:919px;top:993.800px;letter-spacing:-0.2px"><span style="letter-spacing:0.11px">use &lt;1&gt; for activate the label eraser, use &lt;2&gt; for activate the paint brush, use &lt;3&gt; for activate the fill bucket, use &lt;4&gt; for pick mode</span></div>
<svg class="abs" style="left:1846px;top:999px" width="9" height="6"><path d="M0 5.500l4.500-4.500 4.500 4.500z" fill="#a0a5aa"/></svg>
<div class="t" style="left:1858px;top:993.800px"><span style="letter-spacing:0.52px">activity</span></div>
<div class="t" style="left:354.500px;top:943.5px;font-size:14px;letter-spacing:0">1</div>
<div class="abs" style="left:372px;top:946px;width:15px;height:15px;background:#414851;border-radius:2px"><svg width="15" height="15"><path d="M4.300 3l7 4.500-7 4.500z" fill="#d1d2d4"/></svg></div>
<div class="abs" style="left:391px;top:946px;width:13px;height:15px;background:#414851;border-radius:2px"><svg width="13" height="15"><path d="M3.200 3.200v8.600" stroke="#d1d2d4" stroke-width="1.600"/><path d="M10.300 3.200v8.600l-6-4.300z" fill="#d1d2d4"/></svg></div>
<div class="abs" style="left:407px;top:946px;width:737px;height:15px;background:#414851;border-radius:2px"></div>
<div class="abs" style="left:512px;top:946.8px;width:26px;height:13.400px;background:#868e93;border-radius:2.500px"></div>
<div class="abs" style="left:1147px;top:946px;width:13px;height:15px;background:#414851;border-radius:2px"><svg width="13" height="15"><path d="M9.800 3.200v8.600" stroke="#d1d2d4" stroke-width="1.600"/><path d="M2.700 3.200v8.600l6-4.300z" fill="#d1d2d4"/></svg></div>
<div class="t gray" style="left:1151px;width:30.500px;text-align:right;top:943.5px;font-size:14px;letter-spacing:0">6</div>
<div class="abs" style="left:1187px;top:946px;width:1px;height:14px;background:#5a626c"></div>
<div class="t gray" style="left:1195px;top:943.5px;font-size:14px;letter-spacing:0">41</div>
<div class="t" style="left:354.500px;top:966.7px;font-size:14px;letter-spacing:0">0</div>
<div class="abs" style="left:372px;top:969.2px;width:15px;height:15px;background:#414851;border-radius:2px"><svg width="15" height="15"><path d="M4.300 3l7 4.500-7 4.500z" fill="#d1d2d4"/></svg></div>
<div class="abs" style="left:391px;top:969.2px;width:13px;height:15px;background:#414851;border-radius:2px"><svg width="13" height="15"><path d="M3.200 3.200v8.600" stroke="#d1d2d4" stroke-width="1.600"/><path d="M10.300 3.200v8.600l-6-4.300z" fill="#d1d2d4"/></svg></div>
<div class="abs" style="left:407px;top:969.2px;width:737px;height:15px;background:#414851;border-radius:2px"></div>
<div class="abs" style="left:754px;top:970.0px;width:26px;height:13.400px;background:#868e93;border-radius:2.500px"></div>
<div class="abs" style="left:1147px;top:969.2px;width:13px;height:15px;background:#414851;border-radius:2px"><svg width="13" height="15"><path d="M9.800 3.200v8.600" stroke="#d1d2d4" stroke-width="1.600"/><path d="M2.700 3.200v8.600l6-4.300z" fill="#d1d2d4"/></svg></div>
<div class="t gray" style="left:1151px;width:30.500px;text-align:right;top:966.7px;font-size:14px;letter-spacing:0">20</div>
<div class="abs" style="left:1187px;top:969.2px;width:1px;height:14px;background:#5a626c"></div>
<div class="t gray" style="left:1195px;top:966.7px;font-size:14px;letter-spacing:0">41</div><svg class="abs" style="left:1221px;top:395px;background:#fff;overflow:hidden" width="699" height="594" viewBox="1221 395 699 594" font-family="DejaVu Sans, sans-serif" fill="#000" letter-spacing="0">
<rect x="1221" y="395" width="699" height="594" fill="#fff"/>
<path d="M1333.1 467.0V924.2M1453.1 467.0V924.2M1573.1 467.0V924.2M1693.1 467.0V924.2M1813.1 467.0V924.2M1308.5 902.0H1850.0M1308.5 840.0H1850.0M1308.5 778.0H1850.0M1308.5 716.0H1850.0M1308.5 653.0H1850.0M1308.5 591.0H1850.0M1308.5 529.0H1850.0" stroke="#b0b0b0" stroke-opacity=".33" stroke-width="1.900" fill="none"/>
<g stroke="#56782a" fill="#56782a" stroke-opacity=".5" fill-opacity=".5"><polyline fill="none" stroke-width="2.080" stroke-linejoin="round" points="1333.1,688.1 1345.1,697.4 1357.1,706.1 1369.1,736.6 1381.1,741.0 1393.1,734.8 1405.1,703.7 1417.1,683.1 1429.1,662.6 1441.1,636.5 1453.1,622.8 1465.1,634.6 1477.1,622.8 1489.1,566.2 1501.1,573.7 1513.1,587.3 1525.1,596.1 1537.1,589.8 1549.1,581.7 1561.1,597.3 1573.1,618.4 1585.1,643.0 1597.1,638.4 1609.1,673.2 1621.1,650.8 1633.1,637.1 1645.1,604.1 1657.1,617.2 1669.1,592.3 1681.1,594.8 1693.1,596.1 1705.1,597.9 1717.1,588.0 1729.1,579.3 1741.1,607.9 1753.1,624.0 1765.1,617.8 1777.1,616.0 1789.1,637.7 1801.1,629.0 1813.1,615.3 1825.1,604.1"/>
<circle cx="1333.1" cy="688.1" r="4.050" stroke-width="1.390"/><circle cx="1345.1" cy="697.4" r="4.050" stroke-width="1.390"/><circle cx="1357.1" cy="706.1" r="4.050" stroke-width="1.390"/><circle cx="1369.1" cy="736.6" r="4.050" stroke-width="1.390"/><circle cx="1381.1" cy="741.0" r="4.050" stroke-width="1.390"/><circle cx="1393.1" cy="734.8" r="4.050" stroke-width="1.390"/><circle cx="1405.1" cy="703.7" r="4.050" stroke-width="1.390"/><circle cx="1417.1" cy="683.1" r="4.050" stroke-width="1.390"/><circle cx="1429.1" cy="662.6" r="4.050" stroke-width="1.390"/><circle cx="1441.1" cy="636.5" r="4.050" stroke-width="1.390"/><circle cx="1453.1" cy="622.8" r="4.050" stroke-width="1.390"/><circle cx="1465.1" cy="634.6" r="4.050" stroke-width="1.390"/><circle cx="1477.1" cy="622.8" r="4.050" stroke-width="1.390"/><circle cx="1489.1" cy="566.2" r="4.050" stroke-width="1.390"/><circle cx="1501.1" cy="573.7" r="4.050" stroke-width="1.390"/><circle cx="1513.1" cy="587.3" r="4.050" stroke-width="1.390"/><circle cx="1525.1" cy="596.1" r="4.050" stroke-width="1.390"/><circle cx="1537.1" cy="589.8" r="4.050" stroke-width="1.390"/><circle cx="1549.1" cy="581.7" r="4.050" stroke-width="1.390"/><circle cx="1561.1" cy="597.3" r="4.050" stroke-width="1.390"/><circle cx="1573.1" cy="618.4" r="4.050" stroke-width="1.390"/><circle cx="1585.1" cy="643.0" r="4.050" stroke-width="1.390"/><circle cx="1597.1" cy="638.4" r="4.050" stroke-width="1.390"/><circle cx="1609.1" cy="673.2" r="4.050" stroke-width="1.390"/><circle cx="1621.1" cy="650.8" r="4.050" stroke-width="1.390"/><circle cx="1633.1" cy="637.1" r="4.050" stroke-width="1.390"/><circle cx="1645.1" cy="604.1" r="4.050" stroke-width="1.390"/><circle cx="1657.1" cy="617.2" r="4.050" stroke-width="1.390"/><circle cx="1669.1" cy="592.3" r="4.050" stroke-width="1.390"/><circle cx="1681.1" cy="594.8" r="4.050" stroke-width="1.390"/><circle cx="1693.1" cy="596.1" r="4.050" stroke-width="1.390"/><circle cx="1705.1" cy="597.9" r="4.050" stroke-width="1.390"/><circle cx="1717.1" cy="588.0" r="4.050" stroke-width="1.390"/><circle cx="1729.1" cy="579.3" r="4.050" stroke-width="1.390"/><circle cx="1741.1" cy="607.9" r="4.050" stroke-width="1.390"/><circle cx="1753.1" cy="624.0" r="4.050" stroke-width="1.390"/><circle cx="1765.1" cy="617.8" r="4.050" stroke-width="1.390"/><circle cx="1777.1" cy="616.0" r="4.050" stroke-width="1.390"/><circle cx="1789.1" cy="637.7" r="4.050" stroke-width="1.390"/><circle cx="1801.1" cy="629.0" r="4.050" stroke-width="1.390"/><circle cx="1813.1" cy="615.3" r="4.050" stroke-width="1.390"/><circle cx="1825.1" cy="604.1" r="4.050" stroke-width="1.390"/></g>
<g stroke="#e03cd0" fill="#e03cd0" stroke-opacity=".5" fill-opacity=".5"><polyline fill="none" stroke-width="2.080" stroke-linejoin="round" points="1333.1,709.9 1345.1,719.2 1357.1,725.4 1369.1,713.0 1381.1,732.3 1393.1,731.0 1405.1,716.1 1417.1,703.7 1429.1,698.7 1441.1,699.9 1453.1,709.3 1465.1,723.6 1477.1,732.3 1489.1,715.5 1501.1,731.6 1513.1,748.4 1525.1,750.9 1537.1,744.1 1549.1,752.8 1561.1,754.0 1573.1,736.6 1585.1,737.2 1597.1,759.3 1609.1,771.5 1621.1,767.7 1633.1,760.9 1645.1,776.4 1657.1,775.8 1669.1,780.8 1681.1,766.5 1693.1,768.3 1705.1,770.2 1717.1,784.5 1729.1,781.4 1741.1,781.7 1753.1,790.7 1765.1,793.9 1777.1,804.4 1789.1,810.6 1801.1,809.4 1813.1,793.9 1825.1,788.9"/>
<circle cx="1333.1" cy="709.9" r="4.050" stroke-width="1.390"/><circle cx="1345.1" cy="719.2" r="4.050" stroke-width="1.390"/><circle cx="1357.1" cy="725.4" r="4.050" stroke-width="1.390"/><circle cx="1369.1" cy="713.0" r="4.050" stroke-width="1.390"/><circle cx="1381.1" cy="732.3" r="4.050" stroke-width="1.390"/><circle cx="1393.1" cy="731.0" r="4.050" stroke-width="1.390"/><circle cx="1405.1" cy="716.1" r="4.050" stroke-width="1.390"/><circle cx="1417.1" cy="703.7" r="4.050" stroke-width="1.390"/><circle cx="1429.1" cy="698.7" r="4.050" stroke-width="1.390"/><circle cx="1441.1" cy="699.9" r="4.050" stroke-width="1.390"/><circle cx="1453.1" cy="709.3" r="4.050" stroke-width="1.390"/><circle cx="1465.1" cy="723.6" r="4.050" stroke-width="1.390"/><circle cx="1477.1" cy="732.3" r="4.050" stroke-width="1.390"/><circle cx="1489.1" cy="715.5" r="4.050" stroke-width="1.390"/><circle cx="1501.1" cy="731.6" r="4.050" stroke-width="1.390"/><circle cx="1513.1" cy="748.4" r="4.050" stroke-width="1.390"/><circle cx="1525.1" cy="750.9" r="4.050" stroke-width="1.390"/><circle cx="1537.1" cy="744.1" r="4.050" stroke-width="1.390"/><circle cx="1549.1" cy="752.8" r="4.050" stroke-width="1.390"/><circle cx="1561.1" cy="754.0" r="4.050" stroke-width="1.390"/><circle cx="1573.1" cy="736.6" r="4.050" stroke-width="1.390"/><circle cx="1585.1" cy="737.2" r="4.050" stroke-width="1.390"/><circle cx="1597.1" cy="759.3" r="4.050" stroke-width="1.390"/><circle cx="1609.1" cy="771.5" r="4.050" stroke-width="1.390"/><circle cx="1621.1" cy="767.7" r="4.050" stroke-width="1.390"/><circle cx="1633.1" cy="760.9" r="4.050" stroke-width="1.390"/><circle cx="1645.1" cy="776.4" r="4.050" stroke-width="1.390"/><circle cx="1657.1" cy="775.8" r="4.050" stroke-width="1.390"/><circle cx="1669.1" cy="780.8" r="4.050" stroke-width="1.390"/><circle cx="1681.1" cy="766.5" r="4.050" stroke-width="1.390"/><circle cx="1693.1" cy="768.3" r="4.050" stroke-width="1.390"/><circle cx="1705.1" cy="770.2" r="4.050" stroke-width="1.390"/><circle cx="1717.1" cy="784.5" r="4.050" stroke-width="1.390"/><circle cx="1729.1" cy="781.4" r="4.050" stroke-width="1.390"/><circle cx="1741.1" cy="781.7" r="4.050" stroke-width="1.390"/><circle cx="1753.1" cy="790.7" r="4.050" stroke-width="1.390"/><circle cx="1765.1" cy="793.9" r="4.050" stroke-width="1.390"/><circle cx="1777.1" cy="804.4" r="4.050" stroke-width="1.390"/><circle cx="1789.1" cy="810.6" r="4.050" stroke-width="1.390"/><circle cx="1801.1" cy="809.4" r="4.050" stroke-width="1.390"/><circle cx="1813.1" cy="793.9" r="4.050" stroke-width="1.390"/><circle cx="1825.1" cy="788.9" r="4.050" stroke-width="1.390"/></g>
<g stroke="#4c2c9c" fill="#4c2c9c" stroke-opacity=".5" fill-opacity=".5"><polyline fill="none" stroke-width="2.080" stroke-linejoin="round" points="1333.1,721.7 1345.1,725.4 1357.1,719.2 1369.1,714.0 1381.1,718.0 1393.1,724.8 1405.1,722.3 1417.1,712.4 1429.1,727.0 1441.1,722.9 1453.1,754.0 1465.1,783.6 1477.1,777.1 1489.1,766.5 1501.1,777.1 1513.1,773.9 1525.1,759.3 1537.1,755.9 1549.1,753.4 1561.1,746.6 1573.1,742.8 1585.1,772.1 1597.1,769.0 1609.1,777.7 1621.1,775.2 1633.1,780.8 1645.1,801.3 1657.1,788.9 1669.1,798.2 1681.1,797.0 1693.1,781.7 1705.1,803.2 1717.1,798.8 1729.1,800.7 1741.1,773.9 1753.1,790.7 1765.1,782.7 1777.1,782.7 1789.1,803.2 1801.1,805.0 1813.1,788.9 1825.1,802.6"/>
<circle cx="1333.1" cy="721.7" r="4.050" stroke-width="1.390"/><circle cx="1345.1" cy="725.4" r="4.050" stroke-width="1.390"/><circle cx="1357.1" cy="719.2" r="4.050" stroke-width="1.390"/><circle cx="1369.1" cy="714.0" r="4.050" stroke-width="1.390"/><circle cx="1381.1" cy="718.0" r="4.050" stroke-width="1.390"/><circle cx="1393.1" cy="724.8" r="4.050" stroke-width="1.390"/><circle cx="1405.1" cy="722.3" r="4.050" stroke-width="1.390"/><circle cx="1417.1" cy="712.4" r="4.050" stroke-width="1.390"/><circle cx="1429.1" cy="727.0" r="4.050" stroke-width="1.390"/><circle cx="1441.1" cy="722.9" r="4.050" stroke-width="1.390"/><circle cx="1453.1" cy="754.0" r="4.050" stroke-width="1.390"/><circle cx="1465.1" cy="783.6" r="4.050" stroke-width="1.390"/><circle cx="1477.1" cy="777.1" r="4.050" stroke-width="1.390"/><circle cx="1489.1" cy="766.5" r="4.050" stroke-width="1.390"/><circle cx="1501.1" cy="777.1" r="4.050" stroke-width="1.390"/><circle cx="1513.1" cy="773.9" r="4.050" stroke-width="1.390"/><circle cx="1525.1" cy="759.3" r="4.050" stroke-width="1.390"/><circle cx="1537.1" cy="755.9" r="4.050" stroke-width="1.390"/><circle cx="1549.1" cy="753.4" r="4.050" stroke-width="1.390"/><circle cx="1561.1" cy="746.6" r="4.050" stroke-width="1.390"/><circle cx="1573.1" cy="742.8" r="4.050" stroke-width="1.390"/><circle cx="1585.1" cy="772.1" r="4.050" stroke-width="1.390"/><circle cx="1597.1" cy="769.0" r="4.050" stroke-width="1.390"/><circle cx="1609.1" cy="777.7" r="4.050" stroke-width="1.390"/><circle cx="1621.1" cy="775.2" r="4.050" stroke-width="1.390"/><circle cx="1633.1" cy="780.8" r="4.050" stroke-width="1.390"/><circle cx="1645.1" cy="801.3" r="4.050" stroke-width="1.390"/><circle cx="1657.1" cy="788.9" r="4.050" stroke-width="1.390"/><circle cx="1669.1" cy="798.2" r="4.050" stroke-width="1.390"/><circle cx="1681.1" cy="797.0" r="4.050" stroke-width="1.390"/><circle cx="1693.1" cy="781.7" r="4.050" stroke-width="1.390"/><circle cx="1705.1" cy="803.2" r="4.050" stroke-width="1.390"/><circle cx="1717.1" cy="798.8" r="4.050" stroke-width="1.390"/><circle cx="1729.1" cy="800.7" r="4.050" stroke-width="1.390"/><circle cx="1741.1" cy="773.9" r="4.050" stroke-width="1.390"/><circle cx="1753.1" cy="790.7" r="4.050" stroke-width="1.390"/><circle cx="1765.1" cy="782.7" r="4.050" stroke-width="1.390"/><circle cx="1777.1" cy="782.7" r="4.050" stroke-width="1.390"/><circle cx="1789.1" cy="803.2" r="4.050" stroke-width="1.390"/><circle cx="1801.1" cy="805.0" r="4.050" stroke-width="1.390"/><circle cx="1813.1" cy="788.9" r="4.050" stroke-width="1.390"/><circle cx="1825.1" cy="802.6" r="4.050" stroke-width="1.390"/></g>
<g stroke="#b4c22e" fill="#b4c22e" stroke-opacity=".5" fill-opacity=".5"><polyline fill="none" stroke-width="2.080" stroke-linejoin="round" points="1333.1,703.0 1345.1,721.1 1357.1,716.1 1369.1,713.0 1381.1,726.1 1393.1,734.8 1405.1,703.7 1417.1,663.2 1429.1,688.7 1441.1,693.7 1453.1,695.0 1465.1,739.1 1477.1,743.5 1489.1,727.6 1501.1,727.0 1513.1,721.1 1525.1,722.9 1537.1,719.2 1549.1,743.2 1561.1,731.0 1573.1,742.8 1585.1,742.2 1597.1,749.4 1609.1,763.4 1621.1,756.5 1633.1,738.5 1645.1,755.9 1657.1,770.8 1669.1,772.7 1681.1,762.4 1693.1,753.4 1705.1,760.9 1717.1,762.1 1729.1,775.2 1741.1,759.0 1753.1,790.1 1765.1,784.5 1777.1,783.9 1789.1,785.8 1801.1,790.1 1813.1,775.2 1825.1,778.3"/>
<circle cx="1333.1" cy="703.0" r="4.050" stroke-width="1.390"/><circle cx="1345.1" cy="721.1" r="4.050" stroke-width="1.390"/><circle cx="1357.1" cy="716.1" r="4.050" stroke-width="1.390"/><circle cx="1369.1" cy="713.0" r="4.050" stroke-width="1.390"/><circle cx="1381.1" cy="726.1" r="4.050" stroke-width="1.390"/><circle cx="1393.1" cy="734.8" r="4.050" stroke-width="1.390"/><circle cx="1405.1" cy="703.7" r="4.050" stroke-width="1.390"/><circle cx="1417.1" cy="663.2" r="4.050" stroke-width="1.390"/><circle cx="1429.1" cy="688.7" r="4.050" stroke-width="1.390"/><circle cx="1441.1" cy="693.7" r="4.050" stroke-width="1.390"/><circle cx="1453.1" cy="695.0" r="4.050" stroke-width="1.390"/><circle cx="1465.1" cy="739.1" r="4.050" stroke-width="1.390"/><circle cx="1477.1" cy="743.5" r="4.050" stroke-width="1.390"/><circle cx="1489.1" cy="727.6" r="4.050" stroke-width="1.390"/><circle cx="1501.1" cy="727.0" r="4.050" stroke-width="1.390"/><circle cx="1513.1" cy="721.1" r="4.050" stroke-width="1.390"/><circle cx="1525.1" cy="722.9" r="4.050" stroke-width="1.390"/><circle cx="1537.1" cy="719.2" r="4.050" stroke-width="1.390"/><circle cx="1549.1" cy="743.2" r="4.050" stroke-width="1.390"/><circle cx="1561.1" cy="731.0" r="4.050" stroke-width="1.390"/><circle cx="1573.1" cy="742.8" r="4.050" stroke-width="1.390"/><circle cx="1585.1" cy="742.2" r="4.050" stroke-width="1.390"/><circle cx="1597.1" cy="749.4" r="4.050" stroke-width="1.390"/><circle cx="1609.1" cy="763.4" r="4.050" stroke-width="1.390"/><circle cx="1621.1" cy="756.5" r="4.050" stroke-width="1.390"/><circle cx="1633.1" cy="738.5" r="4.050" stroke-width="1.390"/><circle cx="1645.1" cy="755.9" r="4.050" stroke-width="1.390"/><circle cx="1657.1" cy="770.8" r="4.050" stroke-width="1.390"/><circle cx="1669.1" cy="772.7" r="4.050" stroke-width="1.390"/><circle cx="1681.1" cy="762.4" r="4.050" stroke-width="1.390"/><circle cx="1693.1" cy="753.4" r="4.050" stroke-width="1.390"/><circle cx="1705.1" cy="760.9" r="4.050" stroke-width="1.390"/><circle cx="1717.1" cy="762.1" r="4.050" stroke-width="1.390"/><circle cx="1729.1" cy="775.2" r="4.050" stroke-width="1.390"/><circle cx="1741.1" cy="759.0" r="4.050" stroke-width="1.390"/><circle cx="1753.1" cy="790.1" r="4.050" stroke-width="1.390"/><circle cx="1765.1" cy="784.5" r="4.050" stroke-width="1.390"/><circle cx="1777.1" cy="783.9" r="4.050" stroke-width="1.390"/><circle cx="1789.1" cy="785.8" r="4.050" stroke-width="1.390"/><circle cx="1801.1" cy="790.1" r="4.050" stroke-width="1.390"/><circle cx="1813.1" cy="775.2" r="4.050" stroke-width="1.390"/><circle cx="1825.1" cy="778.3" r="4.050" stroke-width="1.390"/></g>
<g stroke="#1a3ce6" fill="#1a3ce6" stroke-opacity=".5" fill-opacity=".5"><polyline fill="none" stroke-width="2.080" stroke-linejoin="round" points="1333.1,706.8 1345.1,714.5 1357.1,722.3 1369.1,715.5 1381.1,718.6 1393.1,714.5 1405.1,706.1 1417.1,695.6 1429.1,687.5 1441.1,685.0 1453.1,682.5 1465.1,687.5 1477.1,712.4 1489.1,698.7 1501.1,710.5 1513.1,703.7 1525.1,731.0 1537.1,719.2 1549.1,729.2 1561.1,731.0 1573.1,725.4 1585.1,725.4 1597.1,727.9 1609.1,722.3 1621.1,722.3 1633.1,738.5 1645.1,728.2 1657.1,725.4 1669.1,733.2 1681.1,733.2 1693.1,724.2 1705.1,716.7 1717.1,710.1 1729.1,731.0 1741.1,721.4 1753.1,759.0 1765.1,760.3 1777.1,762.8 1789.1,762.1 1801.1,764.6 1813.1,770.2 1825.1,751.6"/>
<circle cx="1333.1" cy="706.8" r="4.050" stroke-width="1.390"/><circle cx="1345.1" cy="714.5" r="4.050" stroke-width="1.390"/><circle cx="1357.1" cy="722.3" r="4.050" stroke-width="1.390"/><circle cx="1369.1" cy="715.5" r="4.050" stroke-width="1.390"/><circle cx="1381.1" cy="718.6" r="4.050" stroke-width="1.390"/><circle cx="1393.1" cy="714.5" r="4.050" stroke-width="1.390"/><circle cx="1405.1" cy="706.1" r="4.050" stroke-width="1.390"/><circle cx="1417.1" cy="695.6" r="4.050" stroke-width="1.390"/><circle cx="1429.1" cy="687.5" r="4.050" stroke-width="1.390"/><circle cx="1441.1" cy="685.0" r="4.050" stroke-width="1.390"/><circle cx="1453.1" cy="682.5" r="4.050" stroke-width="1.390"/><circle cx="1465.1" cy="687.5" r="4.050" stroke-width="1.390"/><circle cx="1477.1" cy="712.4" r="4.050" stroke-width="1.390"/><circle cx="1489.1" cy="698.7" r="4.050" stroke-width="1.390"/><circle cx="1501.1" cy="710.5" r="4.050" stroke-width="1.390"/><circle cx="1513.1" cy="703.7" r="4.050" stroke-width="1.390"/><circle cx="1525.1" cy="731.0" r="4.050" stroke-width="1.390"/><circle cx="1537.1" cy="719.2" r="4.050" stroke-width="1.390"/><circle cx="1549.1" cy="729.2" r="4.050" stroke-width="1.390"/><circle cx="1561.1" cy="731.0" r="4.050" stroke-width="1.390"/><circle cx="1573.1" cy="725.4" r="4.050" stroke-width="1.390"/><circle cx="1585.1" cy="725.4" r="4.050" stroke-width="1.390"/><circle cx="1597.1" cy="727.9" r="4.050" stroke-width="1.390"/><circle cx="1609.1" cy="722.3" r="4.050" stroke-width="1.390"/><circle cx="1621.1" cy="722.3" r="4.050" stroke-width="1.390"/><circle cx="1633.1" cy="738.5" r="4.050" stroke-width="1.390"/><circle cx="1645.1" cy="728.2" r="4.050" stroke-width="1.390"/><circle cx="1657.1" cy="725.4" r="4.050" stroke-width="1.390"/><circle cx="1669.1" cy="733.2" r="4.050" stroke-width="1.390"/><circle cx="1681.1" cy="733.2" r="4.050" stroke-width="1.390"/><circle cx="1693.1" cy="724.2" r="4.050" stroke-width="1.390"/><circle cx="1705.1" cy="716.7" r="4.050" stroke-width="1.390"/><circle cx="1717.1" cy="710.1" r="4.050" stroke-width="1.390"/><circle cx="1729.1" cy="731.0" r="4.050" stroke-width="1.390"/><circle cx="1741.1" cy="721.4" r="4.050" stroke-width="1.390"/><circle cx="1753.1" cy="759.0" r="4.050" stroke-width="1.390"/><circle cx="1765.1" cy="760.3" r="4.050" stroke-width="1.390"/><circle cx="1777.1" cy="762.8" r="4.050" stroke-width="1.390"/><circle cx="1789.1" cy="762.1" r="4.050" stroke-width="1.390"/><circle cx="1801.1" cy="764.6" r="4.050" stroke-width="1.390"/><circle cx="1813.1" cy="770.2" r="4.050" stroke-width="1.390"/><circle cx="1825.1" cy="751.6" r="4.050" stroke-width="1.390"/></g>
<g stroke="#9cf07c" fill="#9cf07c" stroke-opacity=".5" fill-opacity=".5"><polyline fill="none" stroke-width="2.080" stroke-linejoin="round" points="1333.1,591.7 1345.1,614.7 1357.1,728.5 1369.1,842.4 1381.1,826.8 1393.1,820.6 1405.1,844.9 1417.1,760.9 1429.1,734.8 1441.1,607.9 1453.1,533.2 1465.1,488.4 1477.1,540.1 1489.1,570.6 1501.1,642.4 1513.1,691.2 1525.1,709.3 1537.1,769.6 1549.1,762.1 1561.1,740.4 1573.1,759.6 1585.1,778.0 1597.1,798.2 1609.1,844.9 1621.1,826.2 1633.1,846.1 1645.1,903.3 1657.1,840.5 1669.1,854.8 1681.1,842.4 1693.1,864.8 1705.1,827.4 1717.1,817.5 1729.1,790.7 1741.1,755.3 1753.1,809.4 1765.1,728.9 1777.1,769.6 1789.1,759.0 1801.1,703.7 1813.1,719.5 1825.1,683.1"/>
<circle cx="1333.1" cy="591.7" r="4.050" stroke-width="1.390"/><circle cx="1345.1" cy="614.7" r="4.050" stroke-width="1.390"/><circle cx="1357.1" cy="728.5" r="4.050" stroke-width="1.390"/><circle cx="1369.1" cy="842.4" r="4.050" stroke-width="1.390"/><circle cx="1381.1" cy="826.8" r="4.050" stroke-width="1.390"/><circle cx="1393.1" cy="820.6" r="4.050" stroke-width="1.390"/><circle cx="1405.1" cy="844.9" r="4.050" stroke-width="1.390"/><circle cx="1417.1" cy="760.9" r="4.050" stroke-width="1.390"/><circle cx="1429.1" cy="734.8" r="4.050" stroke-width="1.390"/><circle cx="1441.1" cy="607.9" r="4.050" stroke-width="1.390"/><circle cx="1453.1" cy="533.2" r="4.050" stroke-width="1.390"/><circle cx="1465.1" cy="488.4" r="4.050" stroke-width="1.390"/><circle cx="1477.1" cy="540.1" r="4.050" stroke-width="1.390"/><circle cx="1489.1" cy="570.6" r="4.050" stroke-width="1.390"/><circle cx="1501.1" cy="642.4" r="4.050" stroke-width="1.390"/><circle cx="1513.1" cy="691.2" r="4.050" stroke-width="1.390"/><circle cx="1525.1" cy="709.3" r="4.050" stroke-width="1.390"/><circle cx="1537.1" cy="769.6" r="4.050" stroke-width="1.390"/><circle cx="1549.1" cy="762.1" r="4.050" stroke-width="1.390"/><circle cx="1561.1" cy="740.4" r="4.050" stroke-width="1.390"/><circle cx="1573.1" cy="759.6" r="4.050" stroke-width="1.390"/><circle cx="1585.1" cy="778.0" r="4.050" stroke-width="1.390"/><circle cx="1597.1" cy="798.2" r="4.050" stroke-width="1.390"/><circle cx="1609.1" cy="844.9" r="4.050" stroke-width="1.390"/><circle cx="1621.1" cy="826.2" r="4.050" stroke-width="1.390"/><circle cx="1633.1" cy="846.1" r="4.050" stroke-width="1.390"/><circle cx="1645.1" cy="903.3" r="4.050" stroke-width="1.390"/><circle cx="1657.1" cy="840.5" r="4.050" stroke-width="1.390"/><circle cx="1669.1" cy="854.8" r="4.050" stroke-width="1.390"/><circle cx="1681.1" cy="842.4" r="4.050" stroke-width="1.390"/><circle cx="1693.1" cy="864.8" r="4.050" stroke-width="1.390"/><circle cx="1705.1" cy="827.4" r="4.050" stroke-width="1.390"/><circle cx="1717.1" cy="817.5" r="4.050" stroke-width="1.390"/><circle cx="1729.1" cy="790.7" r="4.050" stroke-width="1.390"/><circle cx="1741.1" cy="755.3" r="4.050" stroke-width="1.390"/><circle cx="1753.1" cy="809.4" r="4.050" stroke-width="1.390"/><circle cx="1765.1" cy="728.9" r="4.050" stroke-width="1.390"/><circle cx="1777.1" cy="769.6" r="4.050" stroke-width="1.390"/><circle cx="1789.1" cy="759.0" r="4.050" stroke-width="1.390"/><circle cx="1801.1" cy="703.7" r="4.050" stroke-width="1.390"/><circle cx="1813.1" cy="719.5" r="4.050" stroke-width="1.390"/><circle cx="1825.1" cy="683.1" r="4.050" stroke-width="1.390"/></g>
<g stroke="#b468b4" fill="#b468b4" stroke-opacity=".5" fill-opacity=".5"><polyline fill="none" stroke-width="2.080" stroke-linejoin="round" points="1333.1,695.0 1345.1,733.5 1357.1,740.4 1369.1,711.1 1381.1,701.8 1393.1,708.6 1405.1,713.6 1417.1,703.7 1429.1,699.9 1441.1,687.5 1453.1,704.3 1465.1,717.3 1477.1,716.7 1489.1,708.3 1501.1,733.5 1513.1,756.5 1525.1,770.8 1537.1,763.4 1549.1,777.1 1561.1,782.0 1573.1,756.5 1585.1,767.7 1597.1,755.3 1609.1,762.8 1621.1,759.3 1633.1,764.6 1645.1,770.8 1657.1,770.8 1669.1,780.2 1681.1,778.6 1693.1,784.5 1705.1,778.3 1717.1,781.4 1729.1,784.5 1741.1,797.0 1753.1,801.3 1765.1,790.7 1777.1,793.9 1789.1,797.0 1801.1,806.3 1813.1,821.8 1825.1,821.8"/>
<circle cx="1333.1" cy="695.0" r="4.050" stroke-width="1.390"/><circle cx="1345.1" cy="733.5" r="4.050" stroke-width="1.390"/><circle cx="1357.1" cy="740.4" r="4.050" stroke-width="1.390"/><circle cx="1369.1" cy="711.1" r="4.050" stroke-width="1.390"/><circle cx="1381.1" cy="701.8" r="4.050" stroke-width="1.390"/><circle cx="1393.1" cy="708.6" r="4.050" stroke-width="1.390"/><circle cx="1405.1" cy="713.6" r="4.050" stroke-width="1.390"/><circle cx="1417.1" cy="703.7" r="4.050" stroke-width="1.390"/><circle cx="1429.1" cy="699.9" r="4.050" stroke-width="1.390"/><circle cx="1441.1" cy="687.5" r="4.050" stroke-width="1.390"/><circle cx="1453.1" cy="704.3" r="4.050" stroke-width="1.390"/><circle cx="1465.1" cy="717.3" r="4.050" stroke-width="1.390"/><circle cx="1477.1" cy="716.7" r="4.050" stroke-width="1.390"/><circle cx="1489.1" cy="708.3" r="4.050" stroke-width="1.390"/><circle cx="1501.1" cy="733.5" r="4.050" stroke-width="1.390"/><circle cx="1513.1" cy="756.5" r="4.050" stroke-width="1.390"/><circle cx="1525.1" cy="770.8" r="4.050" stroke-width="1.390"/><circle cx="1537.1" cy="763.4" r="4.050" stroke-width="1.390"/><circle cx="1549.1" cy="777.1" r="4.050" stroke-width="1.390"/><circle cx="1561.1" cy="782.0" r="4.050" stroke-width="1.390"/><circle cx="1573.1" cy="756.5" r="4.050" stroke-width="1.390"/><circle cx="1585.1" cy="767.7" r="4.050" stroke-width="1.390"/><circle cx="1597.1" cy="755.3" r="4.050" stroke-width="1.390"/><circle cx="1609.1" cy="762.8" r="4.050" stroke-width="1.390"/><circle cx="1621.1" cy="759.3" r="4.050" stroke-width="1.390"/><circle cx="1633.1" cy="764.6" r="4.050" stroke-width="1.390"/><circle cx="1645.1" cy="770.8" r="4.050" stroke-width="1.390"/><circle cx="1657.1" cy="770.8" r="4.050" stroke-width="1.390"/><circle cx="1669.1" cy="780.2" r="4.050" stroke-width="1.390"/><circle cx="1681.1" cy="778.6" r="4.050" stroke-width="1.390"/><circle cx="1693.1" cy="784.5" r="4.050" stroke-width="1.390"/><circle cx="1705.1" cy="778.3" r="4.050" stroke-width="1.390"/><circle cx="1717.1" cy="781.4" r="4.050" stroke-width="1.390"/><circle cx="1729.1" cy="784.5" r="4.050" stroke-width="1.390"/><circle cx="1741.1" cy="797.0" r="4.050" stroke-width="1.390"/><circle cx="1753.1" cy="801.3" r="4.050" stroke-width="1.390"/><circle cx="1765.1" cy="790.7" r="4.050" stroke-width="1.390"/><circle cx="1777.1" cy="793.9" r="4.050" stroke-width="1.390"/><circle cx="1789.1" cy="797.0" r="4.050" stroke-width="1.390"/><circle cx="1801.1" cy="806.3" r="4.050" stroke-width="1.390"/><circle cx="1813.1" cy="821.8" r="4.050" stroke-width="1.390"/><circle cx="1825.1" cy="821.8" r="4.050" stroke-width="1.390"/></g>
<g stroke="#9a5a28" fill="#9a5a28" stroke-opacity=".5" fill-opacity=".5"><polyline fill="none" stroke-width="2.080" stroke-linejoin="round" points="1333.1,713.6 1345.1,710.5 1357.1,716.7 1369.1,705.2 1381.1,733.5 1393.1,739.1 1405.1,704.3 1417.1,660.7 1429.1,636.5 1441.1,616.6 1453.1,585.5 1465.1,594.8 1477.1,609.1 1489.1,609.1 1501.1,609.1 1513.1,616.6 1525.1,633.4 1537.1,644.3 1549.1,663.2 1561.1,644.3 1573.1,658.3 1585.1,667.0 1597.1,690.6 1609.1,693.1 1621.1,674.4 1633.1,654.8 1645.1,645.2 1657.1,631.2 1669.1,635.9 1681.1,645.2 1693.1,636.1 1705.1,628.4 1717.1,628.4 1729.1,654.8 1741.1,639.0 1753.1,716.1 1765.1,704.3 1777.1,696.2 1789.1,710.5 1801.1,705.5 1813.1,729.2 1825.1,731.6"/>
<circle cx="1333.1" cy="713.6" r="4.050" stroke-width="1.390"/><circle cx="1345.1" cy="710.5" r="4.050" stroke-width="1.390"/><circle cx="1357.1" cy="716.7" r="4.050" stroke-width="1.390"/><circle cx="1369.1" cy="705.2" r="4.050" stroke-width="1.390"/><circle cx="1381.1" cy="733.5" r="4.050" stroke-width="1.390"/><circle cx="1393.1" cy="739.1" r="4.050" stroke-width="1.390"/><circle cx="1405.1" cy="704.3" r="4.050" stroke-width="1.390"/><circle cx="1417.1" cy="660.7" r="4.050" stroke-width="1.390"/><circle cx="1429.1" cy="636.5" r="4.050" stroke-width="1.390"/><circle cx="1441.1" cy="616.6" r="4.050" stroke-width="1.390"/><circle cx="1453.1" cy="585.5" r="4.050" stroke-width="1.390"/><circle cx="1465.1" cy="594.8" r="4.050" stroke-width="1.390"/><circle cx="1477.1" cy="609.1" r="4.050" stroke-width="1.390"/><circle cx="1489.1" cy="609.1" r="4.050" stroke-width="1.390"/><circle cx="1501.1" cy="609.1" r="4.050" stroke-width="1.390"/><circle cx="1513.1" cy="616.6" r="4.050" stroke-width="1.390"/><circle cx="1525.1" cy="633.4" r="4.050" stroke-width="1.390"/><circle cx="1537.1" cy="644.3" r="4.050" stroke-width="1.390"/><circle cx="1549.1" cy="663.2" r="4.050" stroke-width="1.390"/><circle cx="1561.1" cy="644.3" r="4.050" stroke-width="1.390"/><circle cx="1573.1" cy="658.3" r="4.050" stroke-width="1.390"/><circle cx="1585.1" cy="667.0" r="4.050" stroke-width="1.390"/><circle cx="1597.1" cy="690.6" r="4.050" stroke-width="1.390"/><circle cx="1609.1" cy="693.1" r="4.050" stroke-width="1.390"/><circle cx="1621.1" cy="674.4" r="4.050" stroke-width="1.390"/><circle cx="1633.1" cy="654.8" r="4.050" stroke-width="1.390"/><circle cx="1645.1" cy="645.2" r="4.050" stroke-width="1.390"/><circle cx="1657.1" cy="631.2" r="4.050" stroke-width="1.390"/><circle cx="1669.1" cy="635.9" r="4.050" stroke-width="1.390"/><circle cx="1681.1" cy="645.2" r="4.050" stroke-width="1.390"/><circle cx="1693.1" cy="636.1" r="4.050" stroke-width="1.390"/><circle cx="1705.1" cy="628.4" r="4.050" stroke-width="1.390"/><circle cx="1717.1" cy="628.4" r="4.050" stroke-width="1.390"/><circle cx="1729.1" cy="654.8" r="4.050" stroke-width="1.390"/><circle cx="1741.1" cy="639.0" r="4.050" stroke-width="1.390"/><circle cx="1753.1" cy="716.1" r="4.050" stroke-width="1.390"/><circle cx="1765.1" cy="704.3" r="4.050" stroke-width="1.390"/><circle cx="1777.1" cy="696.2" r="4.050" stroke-width="1.390"/><circle cx="1789.1" cy="710.5" r="4.050" stroke-width="1.390"/><circle cx="1801.1" cy="705.5" r="4.050" stroke-width="1.390"/><circle cx="1813.1" cy="729.2" r="4.050" stroke-width="1.390"/><circle cx="1825.1" cy="731.6" r="4.050" stroke-width="1.390"/></g>
<g stroke="#5ab4e0" fill="#5ab4e0" stroke-opacity=".5" fill-opacity=".5"><polyline fill="none" stroke-width="2.080" stroke-linejoin="round" points="1333.1,720.8 1345.1,727.9 1357.1,727.3 1369.1,700.6 1381.1,704.3 1393.1,705.5 1405.1,697.4 1417.1,646.4 1429.1,675.7 1441.1,684.4 1453.1,677.5 1465.1,682.5 1477.1,670.1 1489.1,670.4 1501.1,694.3 1513.1,703.0 1525.1,723.6 1537.1,739.7 1549.1,753.4 1561.1,761.5 1573.1,782.0 1585.1,823.7 1597.1,825.0 1609.1,818.1 1621.1,815.0 1633.1,836.1 1645.1,820.6 1657.1,805.0 1669.1,808.2 1681.1,797.0 1693.1,788.9 1705.1,788.3 1717.1,788.9 1729.1,787.6 1741.1,773.3 1753.1,788.9 1765.1,790.7 1777.1,778.3 1789.1,799.4 1801.1,801.3 1813.1,805.0 1825.1,779.5"/>
<circle cx="1333.1" cy="720.8" r="4.050" stroke-width="1.390"/><circle cx="1345.1" cy="727.9" r="4.050" stroke-width="1.390"/><circle cx="1357.1" cy="727.3" r="4.050" stroke-width="1.390"/><circle cx="1369.1" cy="700.6" r="4.050" stroke-width="1.390"/><circle cx="1381.1" cy="704.3" r="4.050" stroke-width="1.390"/><circle cx="1393.1" cy="705.5" r="4.050" stroke-width="1.390"/><circle cx="1405.1" cy="697.4" r="4.050" stroke-width="1.390"/><circle cx="1417.1" cy="646.4" r="4.050" stroke-width="1.390"/><circle cx="1429.1" cy="675.7" r="4.050" stroke-width="1.390"/><circle cx="1441.1" cy="684.4" r="4.050" stroke-width="1.390"/><circle cx="1453.1" cy="677.5" r="4.050" stroke-width="1.390"/><circle cx="1465.1" cy="682.5" r="4.050" stroke-width="1.390"/><circle cx="1477.1" cy="670.1" r="4.050" stroke-width="1.390"/><circle cx="1489.1" cy="670.4" r="4.050" stroke-width="1.390"/><circle cx="1501.1" cy="694.3" r="4.050" stroke-width="1.390"/><circle cx="1513.1" cy="703.0" r="4.050" stroke-width="1.390"/><circle cx="1525.1" cy="723.6" r="4.050" stroke-width="1.390"/><circle cx="1537.1" cy="739.7" r="4.050" stroke-width="1.390"/><circle cx="1549.1" cy="753.4" r="4.050" stroke-width="1.390"/><circle cx="1561.1" cy="761.5" r="4.050" stroke-width="1.390"/><circle cx="1573.1" cy="782.0" r="4.050" stroke-width="1.390"/><circle cx="1585.1" cy="823.7" r="4.050" stroke-width="1.390"/><circle cx="1597.1" cy="825.0" r="4.050" stroke-width="1.390"/><circle cx="1609.1" cy="818.1" r="4.050" stroke-width="1.390"/><circle cx="1621.1" cy="815.0" r="4.050" stroke-width="1.390"/><circle cx="1633.1" cy="836.1" r="4.050" stroke-width="1.390"/><circle cx="1645.1" cy="820.6" r="4.050" stroke-width="1.390"/><circle cx="1657.1" cy="805.0" r="4.050" stroke-width="1.390"/><circle cx="1669.1" cy="808.2" r="4.050" stroke-width="1.390"/><circle cx="1681.1" cy="797.0" r="4.050" stroke-width="1.390"/><circle cx="1693.1" cy="788.9" r="4.050" stroke-width="1.390"/><circle cx="1705.1" cy="788.3" r="4.050" stroke-width="1.390"/><circle cx="1717.1" cy="788.9" r="4.050" stroke-width="1.390"/><circle cx="1729.1" cy="787.6" r="4.050" stroke-width="1.390"/><circle cx="1741.1" cy="773.3" r="4.050" stroke-width="1.390"/><circle cx="1753.1" cy="788.9" r="4.050" stroke-width="1.390"/><circle cx="1765.1" cy="790.7" r="4.050" stroke-width="1.390"/><circle cx="1777.1" cy="778.3" r="4.050" stroke-width="1.390"/><circle cx="1789.1" cy="799.4" r="4.050" stroke-width="1.390"/><circle cx="1801.1" cy="801.3" r="4.050" stroke-width="1.390"/><circle cx="1813.1" cy="805.0" r="4.050" stroke-width="1.390"/><circle cx="1825.1" cy="779.5" r="4.050" stroke-width="1.390"/></g>
<g stroke="#54242c" fill="#54242c" stroke-opacity=".5" fill-opacity=".5"><polyline fill="none" stroke-width="2.080" stroke-linejoin="round" points="1333.1,707.4 1345.1,701.8 1357.1,716.1 1369.1,713.6 1381.1,741.0 1393.1,747.2 1405.1,702.4 1417.1,695.0 1429.1,714.5 1441.1,718.6 1453.1,717.7 1465.1,733.5 1477.1,744.1 1489.1,737.2 1501.1,738.5 1513.1,755.3 1525.1,775.2 1537.1,781.7 1549.1,782.0 1561.1,790.7 1573.1,763.4 1585.1,769.6 1597.1,785.1 1609.1,784.5 1621.1,780.2 1633.1,781.7 1645.1,792.0 1657.1,790.1 1669.1,791.4 1681.1,817.5 1693.1,814.4 1705.1,803.2 1717.1,813.8 1729.1,793.9 1741.1,810.6 1753.1,817.5 1765.1,801.3 1777.1,781.7 1789.1,806.3 1801.1,816.2 1813.1,818.1 1825.1,807.5"/>
<circle cx="1333.1" cy="707.4" r="4.050" stroke-width="1.390"/><circle cx="1345.1" cy="701.8" r="4.050" stroke-width="1.390"/><circle cx="1357.1" cy="716.1" r="4.050" stroke-width="1.390"/><circle cx="1369.1" cy="713.6" r="4.050" stroke-width="1.390"/><circle cx="1381.1" cy="741.0" r="4.050" stroke-width="1.390"/><circle cx="1393.1" cy="747.2" r="4.050" stroke-width="1.390"/><circle cx="1405.1" cy="702.4" r="4.050" stroke-width="1.390"/><circle cx="1417.1" cy="695.0" r="4.050" stroke-width="1.390"/><circle cx="1429.1" cy="714.5" r="4.050" stroke-width="1.390"/><circle cx="1441.1" cy="718.6" r="4.050" stroke-width="1.390"/><circle cx="1453.1" cy="717.7" r="4.050" stroke-width="1.390"/><circle cx="1465.1" cy="733.5" r="4.050" stroke-width="1.390"/><circle cx="1477.1" cy="744.1" r="4.050" stroke-width="1.390"/><circle cx="1489.1" cy="737.2" r="4.050" stroke-width="1.390"/><circle cx="1501.1" cy="738.5" r="4.050" stroke-width="1.390"/><circle cx="1513.1" cy="755.3" r="4.050" stroke-width="1.390"/><circle cx="1525.1" cy="775.2" r="4.050" stroke-width="1.390"/><circle cx="1537.1" cy="781.7" r="4.050" stroke-width="1.390"/><circle cx="1549.1" cy="782.0" r="4.050" stroke-width="1.390"/><circle cx="1561.1" cy="790.7" r="4.050" stroke-width="1.390"/><circle cx="1573.1" cy="763.4" r="4.050" stroke-width="1.390"/><circle cx="1585.1" cy="769.6" r="4.050" stroke-width="1.390"/><circle cx="1597.1" cy="785.1" r="4.050" stroke-width="1.390"/><circle cx="1609.1" cy="784.5" r="4.050" stroke-width="1.390"/><circle cx="1621.1" cy="780.2" r="4.050" stroke-width="1.390"/><circle cx="1633.1" cy="781.7" r="4.050" stroke-width="1.390"/><circle cx="1645.1" cy="792.0" r="4.050" stroke-width="1.390"/><circle cx="1657.1" cy="790.1" r="4.050" stroke-width="1.390"/><circle cx="1669.1" cy="791.4" r="4.050" stroke-width="1.390"/><circle cx="1681.1" cy="817.5" r="4.050" stroke-width="1.390"/><circle cx="1693.1" cy="814.4" r="4.050" stroke-width="1.390"/><circle cx="1705.1" cy="803.2" r="4.050" stroke-width="1.390"/><circle cx="1717.1" cy="813.8" r="4.050" stroke-width="1.390"/><circle cx="1729.1" cy="793.9" r="4.050" stroke-width="1.390"/><circle cx="1741.1" cy="810.6" r="4.050" stroke-width="1.390"/><circle cx="1753.1" cy="817.5" r="4.050" stroke-width="1.390"/><circle cx="1765.1" cy="801.3" r="4.050" stroke-width="1.390"/><circle cx="1777.1" cy="781.7" r="4.050" stroke-width="1.390"/><circle cx="1789.1" cy="806.3" r="4.050" stroke-width="1.390"/><circle cx="1801.1" cy="816.2" r="4.050" stroke-width="1.390"/><circle cx="1813.1" cy="818.1" r="4.050" stroke-width="1.390"/><circle cx="1825.1" cy="807.5" r="4.050" stroke-width="1.390"/></g>
<path d="M1308.5 467.0V924.2H1850.0" stroke="#000" stroke-width="1.110" fill="none" stroke-linecap="square"/>
<path d="M1333.1 924.2v4.860M1453.1 924.2v4.860M1573.1 924.2v4.860M1693.1 924.2v4.860M1813.1 924.2v4.860M1308.5 902.0h-4.860M1308.5 840.0h-4.860M1308.5 778.0h-4.860M1308.5 716.0h-4.860M1308.5 653.0h-4.860M1308.5 591.0h-4.860M1308.5 529.0h-4.860" stroke="#000" stroke-width="1.110" fill="none"/>
<text x="1333.1" y="944.300" font-size="13.890" text-anchor="middle">0</text>
<text x="1453.1" y="944.300" font-size="13.890" text-anchor="middle">50</text>
<text x="1573.1" y="944.300" font-size="13.890" text-anchor="middle">100</text>
<text x="1693.1" y="944.300" font-size="13.890" text-anchor="middle">150</text>
<text x="1813.1" y="944.300" font-size="13.890" text-anchor="middle">200</text>
<text x="1299.300" y="908.0" font-size="13.890" text-anchor="end">−0.3</text>
<text x="1299.300" y="845.8" font-size="13.890" text-anchor="end">−0.2</text>
<text x="1299.300" y="783.6" font-size="13.890" text-anchor="end">−0.1</text>
<text x="1299.300" y="721.4" font-size="13.890" text-anchor="end">0.0</text>
<text x="1299.300" y="659.2" font-size="13.890" text-anchor="end">0.1</text>
<text x="1299.300" y="597.0" font-size="13.890" text-anchor="end">0.2</text>
<text x="1299.300" y="534.8" font-size="13.890" text-anchor="end">0.3</text>
<text x="1579.500" y="964.200" font-size="13.890" text-anchor="middle">Time, s</text>
<text transform="translate(1257.300 695.500) rotate(-90)" font-size="13.890" text-anchor="middle">ΔF/F0</text>
<text x="1579.500" y="458.700" font-size="16.670" text-anchor="middle">24_03_14_03_ch1 ΔF/F0 profiles (lim -10.0, 10.0), labels 24_03_14_03_Eapp_norm_red-green_up-labels</text>
</svg></body></html>
